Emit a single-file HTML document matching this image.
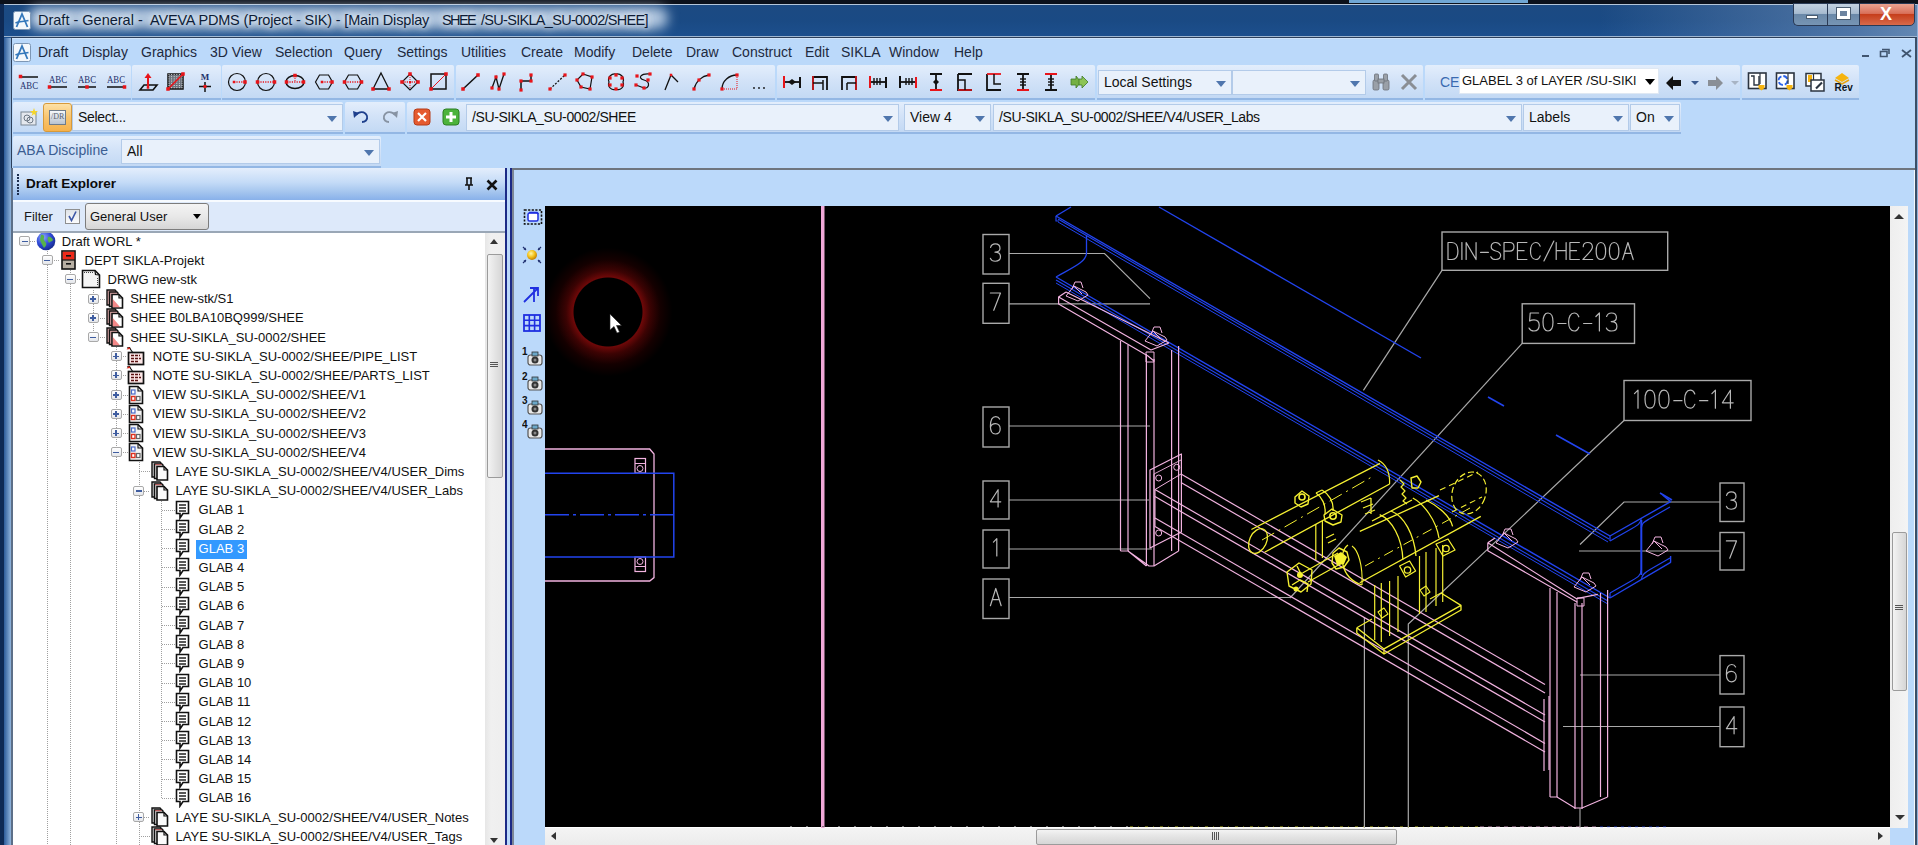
<!DOCTYPE html>
<html><head><meta charset="utf-8">
<style>
*{margin:0;padding:0;box-sizing:border-box}
html,body{width:1918px;height:845px;overflow:hidden;background:#bcd6f4;font-family:"Liberation Sans",sans-serif}
.a{position:absolute}
.t{position:absolute;white-space:nowrap;line-height:1}
#title{left:0;top:0;width:1918px;height:38px;background:linear-gradient(#1f4f8d,#2459a0 60%,#235797)}
.ttl{top:13px;font-size:14.5px;color:#0d1c36;text-shadow:0 0 6px rgba(240,246,252,.95),0 0 10px rgba(235,243,252,.9),0 0 14px rgba(230,240,250,.8)}
.menu{font-size:14px;color:#1e2a3e;top:45px}
.combo{position:absolute;background:#e9f1fb;border:1px solid #a9c3e3}
.dd{position:absolute;width:0;height:0;border-left:5px solid transparent;border-right:5px solid transparent;border-top:5px solid #4a6fa3}
.tb{position:absolute;background:linear-gradient(#dfeafa,#c9ddf5 70%,#bcd4f1);border-bottom:2px solid #8fb3e2}
.tree{font-size:13px;color:#111}
.exp{position:absolute;width:11px;height:11px;border:1px solid #9aa4ad;background:linear-gradient(#fff,#d9dde2);border-radius:2px}
.exp:before{content:"";position:absolute;left:2px;top:4px;width:5px;height:1px;background:#3a4d80}
.exp.p:after{content:"";position:absolute;left:4px;top:2px;width:1px;height:5px;background:#3a4d80}
.vd{position:absolute;width:0;border-left:1px dotted #9a9a9a}
.hd{position:absolute;height:0;border-top:1px dotted #9a9a9a}
</style></head><body>

<!-- top strip -->
<div class="a" style="left:0;top:0;width:1918px;height:4px;background:#0c111b"></div>
<div class="a" style="left:1349px;top:0;width:179px;height:3px;background:#6fa6d4"></div>
<!-- title bar -->
<div class="a" style="left:0;top:4px;width:1918px;height:34px;background:linear-gradient(#1c4a82,#1a4a84 50%,#1d508e)"></div>
<div class="a" style="left:1600px;top:5px;width:318px;height:32px;background:linear-gradient(90deg,rgba(120,150,190,0),rgba(120,150,190,.55) 80%,rgba(130,160,195,.7))"></div>
<div class="a" style="left:0;top:4px;width:1918px;height:1px;background:#b4c6da"></div>
<div class="a" style="left:0;top:36px;width:1918px;height:1px;background:#9fb6d0"></div>
<div class="a" style="left:28px;top:7px;width:640px;height:22px;border-radius:11px;background:rgba(215,230,246,.8);filter:blur(6px)"></div>
<div class="t ttl" id="t1" style="left:38px">Draft - General -</div><div class="t ttl" id="t2" style="left:150px;letter-spacing:-0.17px">AVEVA PDMS (Project - SIK) - [Main Display</div><div class="t ttl" id="t3" style="left:442px;letter-spacing:-1.6px">SHEE</div><div class="t ttl" id="t4" style="left:481px;letter-spacing:-0.7px">/SU-SIKLA_SU-0002/SHEE]</div>
<!-- app icon -->
<svg class="a" style="left:13px;top:11px" width="18" height="19" viewBox="0 0 18 19"><rect x="0.5" y="0.5" width="17" height="18" rx="2" fill="#f4f8fc" stroke="#7d97b5"/><path d="M3.5 16 L9 3 L14.5 16" fill="none" stroke="#3578bb" stroke-width="1.8"/><path d="M2.5 12 C6 10 10 11 15.5 9.5" fill="none" stroke="#3578bb" stroke-width="1.5"/></svg>
<!-- caption buttons -->
<div class="a" style="left:1793px;top:3px;width:34px;height:23px;border:1px solid #2a3a55;border-right:none;border-radius:0 0 0 5px;background:linear-gradient(#c3d1e0,#a7bbd0 45%,#6a88a8 50%,#7795b4)"></div>
<div class="a" style="left:1806px;top:15px;width:12px;height:4px;background:#fff;border:1px solid #4a5c70"></div>
<div class="a" style="left:1827px;top:3px;width:32px;height:23px;border:1px solid #2a3a55;border-right:none;background:linear-gradient(#c3d1e0,#a7bbd0 45%,#6a88a8 50%,#7795b4)"></div>
<div class="a" style="left:1837px;top:8px;width:13px;height:11px;border:3px solid #fff;outline:1px solid #4a5c70;background:#6d84a0"></div>
<div class="a" style="left:1859px;top:3px;width:56px;height:23px;border:1px solid #2a3a55;border-radius:0 0 5px 0;background:linear-gradient(#eaa391,#d9705a 45%,#c63e1c 50%,#d86a4a)"></div>
<div class="t" style="left:1880px;top:5px;font-size:18px;font-weight:bold;color:#fff">X</div>
<!-- outer frame edges -->
<div class="a" style="left:0;top:4px;width:4px;height:841px;background:#0e2a55"></div>
<div class="a" style="left:4px;top:38px;width:7px;height:807px;background:linear-gradient(90deg,#2d5c9a,#90b4dc)"></div>
<div class="a" style="left:1917px;top:4px;width:1px;height:841px;background:#8fb0d8"></div>

<!-- MDI area frame -->
<div class="a" style="left:11px;top:37px;width:1906px;height:808px;background:#bbd9fa;border-top:1px solid #2c3f5a;border-left:1px solid #2c3f5a;border-right:2px solid #3a4e66"></div>
<div class="a" style="left:12px;top:38px;width:1902px;height:1px;background:#cfe4fb"></div>

<!-- menu bar -->
<svg class="a" style="left:13px;top:43px" width="18" height="19" viewBox="0 0 18 19"><rect x="0.5" y="0.5" width="17" height="18" rx="2" fill="#f4f8fc" stroke="#7d97b5"/><path d="M3.5 16 L9 3 L14.5 16" fill="none" stroke="#3578bb" stroke-width="1.8"/><path d="M2.5 12 C6 10 10 11 15.5 9.5" fill="none" stroke="#3578bb" stroke-width="1.5"/></svg>
<div class="t menu" style="left:38px" id="m0">Draft</div>
<div class="t menu" style="left:82px" id="m1">Display</div>
<div class="t menu" style="left:141px" id="m2">Graphics</div>
<div class="t menu" style="left:210px" id="m3">3D View</div>
<div class="t menu" style="left:275px" id="m4">Selection</div>
<div class="t menu" style="left:344px" id="m5">Query</div>
<div class="t menu" style="left:397px" id="m6">Settings</div>
<div class="t menu" style="left:461px" id="m7">Utilities</div>
<div class="t menu" style="left:521px" id="m8">Create</div>
<div class="t menu" style="left:574px" id="m9">Modify</div>
<div class="t menu" style="left:632px" id="m10">Delete</div>
<div class="t menu" style="left:686px" id="m11">Draw</div>
<div class="t menu" style="left:732px" id="m12">Construct</div>
<div class="t menu" style="left:805px" id="m13">Edit</div>
<div class="t menu" style="left:841px" id="m14">SIKLA</div>
<div class="t menu" style="left:889px" id="m15">Window</div>
<div class="t menu" style="left:954px" id="m16">Help</div>
<!-- MDI child buttons -->
<div class="a" style="left:1862px;top:55px;width:7px;height:2px;background:#40556f"></div>
<svg class="a" style="left:1879px;top:48px" width="11" height="10" viewBox="0 0 11 10"><path d="M3 1.5 H10 V6 M1.5 3.5 H8 V8.5 H1.5 Z" fill="none" stroke="#40556f" stroke-width="1.6"/></svg>
<svg class="a" style="left:1901px;top:49px" width="11" height="9" viewBox="0 0 11 9"><path d="M1 1 L10 8 M10 1 L1 8" stroke="#40556f" stroke-width="1.8"/></svg>

<div class="a" style="left:13px;top:65px;width:118px;height:35px;background:linear-gradient(#e3eefc,#d3e3f8 45%,#c3d9f4);border-bottom:2px solid #93b7e4;border-radius:2px 2px 0 0"></div>
<div class="a" style="left:132px;top:65px;width:89px;height:35px;background:linear-gradient(#e3eefc,#d3e3f8 45%,#c3d9f4);border-bottom:2px solid #93b7e4;border-radius:2px 2px 0 0"></div>
<div class="a" style="left:222px;top:65px;width:232px;height:35px;background:linear-gradient(#e3eefc,#d3e3f8 45%,#c3d9f4);border-bottom:2px solid #93b7e4;border-radius:2px 2px 0 0"></div>
<div class="a" style="left:456px;top:65px;width:319px;height:35px;background:linear-gradient(#e3eefc,#d3e3f8 45%,#c3d9f4);border-bottom:2px solid #93b7e4;border-radius:2px 2px 0 0"></div>
<div class="a" style="left:777px;top:65px;width:318px;height:35px;background:linear-gradient(#e3eefc,#d3e3f8 45%,#c3d9f4);border-bottom:2px solid #93b7e4;border-radius:2px 2px 0 0"></div>
<div class="a" style="left:1097px;top:65px;width:326px;height:35px;background:linear-gradient(#e3eefc,#d3e3f8 45%,#c3d9f4);border-bottom:2px solid #93b7e4;border-radius:2px 2px 0 0"></div>
<div class="a" style="left:1425px;top:65px;width:315px;height:35px;background:linear-gradient(#e3eefc,#d3e3f8 45%,#c3d9f4);border-bottom:2px solid #93b7e4;border-radius:2px 2px 0 0"></div>
<div class="a" style="left:1742px;top:65px;width:117px;height:35px;background:linear-gradient(#e3eefc,#d3e3f8 45%,#c3d9f4);border-bottom:2px solid #93b7e4;border-radius:2px 2px 0 0"></div>
<div class="a" style="left:13px;top:102px;width:330px;height:32px;background:linear-gradient(#e3eefc,#d3e3f8 45%,#c3d9f4);border-bottom:2px solid #93b7e4;border-radius:2px 2px 0 0"></div>
<div class="a" style="left:345px;top:102px;width:60px;height:32px;background:linear-gradient(#e3eefc,#d3e3f8 45%,#c3d9f4);border-bottom:2px solid #93b7e4;border-radius:2px 2px 0 0"></div>
<div class="a" style="left:407px;top:102px;width:1274px;height:32px;background:linear-gradient(#e3eefc,#d3e3f8 45%,#c3d9f4);border-bottom:2px solid #93b7e4;border-radius:2px 2px 0 0"></div>
<div class="a" style="left:13px;top:136px;width:368px;height:32px;background:linear-gradient(#e3eefc,#d3e3f8 45%,#c3d9f4);border-bottom:2px solid #93b7e4;border-radius:2px 2px 0 0"></div>
<svg class="a" style="left:18.0px;top:71.0px" width="22" height="22" viewBox="0 0 22 22"><line x1="2" y1="6" x2="20" y2="6" stroke="#111" stroke-width="1.5"/><rect x="0.75" y="3.75" width="3.5" height="3.5" fill="#e8141a"/><text x="11" y="18" font-family="Liberation Serif" font-size="9.5" fill="#23306a" text-anchor="middle" textLength="18" lengthAdjust="spacingAndGlyphs">ABC</text></svg>
<svg class="a" style="left:46.5px;top:71.0px" width="22" height="22" viewBox="0 0 22 22"><text x="11" y="12" font-family="Liberation Serif" font-size="9.5" fill="#23306a" text-anchor="middle" textLength="18" lengthAdjust="spacingAndGlyphs">ABC</text><line x1="2" y1="16" x2="20" y2="16" stroke="#111" stroke-width="1.5"/><rect x="0.75" y="14.25" width="3.5" height="3.5" fill="#e8141a"/></svg>
<svg class="a" style="left:75.5px;top:71.0px" width="22" height="22" viewBox="0 0 22 22"><text x="11" y="12" font-family="Liberation Serif" font-size="9.5" fill="#23306a" text-anchor="middle" textLength="18" lengthAdjust="spacingAndGlyphs">ABC</text><line x1="2" y1="16" x2="20" y2="16" stroke="#111" stroke-width="1.5"/><rect x="9.25" y="14.25" width="3.5" height="3.5" fill="#e8141a"/></svg>
<svg class="a" style="left:104.5px;top:71.0px" width="22" height="22" viewBox="0 0 22 22"><text x="11" y="12" font-family="Liberation Serif" font-size="9.5" fill="#23306a" text-anchor="middle" textLength="18" lengthAdjust="spacingAndGlyphs">ABC</text><line x1="2" y1="16" x2="20" y2="16" stroke="#111" stroke-width="1.5"/><rect x="17.75" y="14.25" width="3.5" height="3.5" fill="#e8141a"/></svg>
<svg class="a" style="left:136.5px;top:71.0px" width="22" height="22" viewBox="0 0 22 22"><path d="M3 19 L7 14 L20 14 L16 19 Z" fill="none" stroke="#111" stroke-width="1.6"/><line x1="11" y1="16" x2="11" y2="5" stroke="#e8141a" stroke-width="2"/><path d="M7.5 7 L11 2 L14.5 7 Z" fill="#e8141a"/><rect x="9.75" y="15.25" width="2.5" height="2.5" fill="#e8141a"/></svg>
<svg class="a" style="left:165.0px;top:71.0px" width="22" height="22" viewBox="0 0 22 22"><rect x="3" y="3" width="15" height="15" fill="#6d737d" stroke="#111" stroke-width="1.5"/><line x1="4.0" y1="3" x2="4.0" y2="18" stroke="#fff" stroke-width="0.8" stroke-dasharray="1 1.2"/><line x1="6.6" y1="3" x2="6.6" y2="18" stroke="#fff" stroke-width="0.8" stroke-dasharray="1 1.2"/><line x1="9.2" y1="3" x2="9.2" y2="18" stroke="#fff" stroke-width="0.8" stroke-dasharray="1 1.2"/><line x1="11.8" y1="3" x2="11.8" y2="18" stroke="#fff" stroke-width="0.8" stroke-dasharray="1 1.2"/><line x1="14.4" y1="3" x2="14.4" y2="18" stroke="#fff" stroke-width="0.8" stroke-dasharray="1 1.2"/><line x1="17.0" y1="3" x2="17.0" y2="18" stroke="#fff" stroke-width="0.8" stroke-dasharray="1 1.2"/><line x1="3" y1="18" x2="18" y2="3" stroke="#e8141a" stroke-width="1.6"/><rect x="1.25" y="16.25" width="3.5" height="3.5" fill="#e8141a"/><rect x="16.25" y="1.25" width="3.5" height="3.5" fill="#e8141a"/></svg>
<svg class="a" style="left:193.5px;top:71.0px" width="22" height="22" viewBox="0 0 22 22"><text x="11" y="9" font-family="Liberation Serif" font-size="9" font-weight="bold" fill="#23306a" text-anchor="middle">M</text><line x1="11" y1="11" x2="11" y2="21" stroke="#111" stroke-width="1.5"/><line x1="5" y1="15.5" x2="17" y2="15.5" stroke="#111" stroke-width="1.5"/><rect x="9.5" y="14.0" width="3" height="3" fill="#e8141a"/></svg>
<svg class="a" style="left:226.0px;top:71.0px" width="22" height="22" viewBox="0 0 22 22"><circle cx="11" cy="11" r="8.5" fill="none" stroke="#111" stroke-width="1.2"/><line x1="8" y1="11" x2="19" y2="11" stroke="#e8141a" stroke-width="1.3" stroke-dasharray="1.2 1.2"/><rect x="6.75" y="9.75" width="2.5" height="2.5" fill="#e8141a"/><rect x="17.25" y="9.25" width="3.5" height="3.5" fill="#e8141a"/></svg>
<svg class="a" style="left:255.0px;top:71.0px" width="22" height="22" viewBox="0 0 22 22"><ellipse cx="11" cy="11" rx="8.5" ry="8.5" fill="none" stroke="#111" stroke-width="1.2"/><line x1="3" y1="11" x2="19" y2="11" stroke="#e8141a" stroke-width="1.3" stroke-dasharray="1.2 1.2"/><rect x="0.75" y="9.25" width="3.5" height="3.5" fill="#e8141a"/><rect x="17.75" y="9.25" width="3.5" height="3.5" fill="#e8141a"/></svg>
<svg class="a" style="left:284.0px;top:71.0px" width="22" height="22" viewBox="0 0 22 22"><ellipse cx="11" cy="11" rx="9" ry="6.5" fill="none" stroke="#111" stroke-width="1.4"/><line x1="3" y1="11" x2="19" y2="11" stroke="#e8141a" stroke-width="1.3" stroke-dasharray="1.2 1.2"/><line x1="11" y1="5" x2="11" y2="11" stroke="#e8141a" stroke-width="1" stroke-dasharray="1 1"/><rect x="0.75" y="9.25" width="3.5" height="3.5" fill="#e8141a"/><rect x="17.75" y="9.25" width="3.5" height="3.5" fill="#e8141a"/><rect x="9.25" y="2.75" width="3.5" height="3.5" fill="#e8141a"/></svg>
<svg class="a" style="left:312.5px;top:71.0px" width="22" height="22" viewBox="0 0 22 22"><path d="M2.5 11 L6.5 4 L15.5 4 L19.5 11 L15.5 18 L6.5 18 Z" fill="none" stroke="#111" stroke-width="1.2"/><line x1="9" y1="11" x2="19" y2="11" stroke="#e8141a" stroke-width="1.3" stroke-dasharray="1.2 1.2"/><rect x="7.75" y="9.75" width="2.5" height="2.5" fill="#e8141a"/><rect x="17.25" y="9.25" width="3.5" height="3.5" fill="#e8141a"/></svg>
<svg class="a" style="left:341.5px;top:71.0px" width="22" height="22" viewBox="0 0 22 22"><path d="M2.5 11 L6.5 4 L15.5 4 L19.5 11 L15.5 18 L6.5 18 Z" fill="none" stroke="#111" stroke-width="1.2"/><line x1="3" y1="11" x2="19" y2="11" stroke="#e8141a" stroke-width="1.3" stroke-dasharray="1.2 1.2"/><rect x="0.75" y="9.25" width="3.5" height="3.5" fill="#e8141a"/><rect x="17.75" y="9.25" width="3.5" height="3.5" fill="#e8141a"/></svg>
<svg class="a" style="left:370.0px;top:71.0px" width="22" height="22" viewBox="0 0 22 22"><path d="M11 2 L19 18 L3 18 Z" fill="none" stroke="#111" stroke-width="1.3"/><rect x="1.25" y="16.25" width="3.5" height="3.5" fill="#e8141a"/><rect x="17.25" y="16.25" width="3.5" height="3.5" fill="#e8141a"/></svg>
<svg class="a" style="left:399.0px;top:71.0px" width="22" height="22" viewBox="0 0 22 22"><path d="M11 3 L19 11 L11 19 L3 11 Z" fill="none" stroke="#111" stroke-width="1.2"/><line x1="3" y1="11" x2="19" y2="11" stroke="#e8141a" stroke-width="1.3" stroke-dasharray="1.2 1.2"/><line x1="11" y1="4" x2="11" y2="18" stroke="#e8141a" stroke-width="1" stroke-dasharray="1 1"/><rect x="1.25" y="9.25" width="3.5" height="3.5" fill="#e8141a"/><rect x="17.25" y="9.25" width="3.5" height="3.5" fill="#e8141a"/><rect x="9.25" y="1.25" width="3.5" height="3.5" fill="#e8141a"/><rect x="10.0" y="10.0" width="2" height="2" fill="#e8141a"/></svg>
<svg class="a" style="left:427.0px;top:71.0px" width="22" height="22" viewBox="0 0 22 22"><rect x="4" y="3" width="15" height="15" fill="none" stroke="#111" stroke-width="1.5"/><line x1="4" y1="18" x2="19" y2="3" stroke="#e8141a" stroke-width="1"/><rect x="2.25" y="16.25" width="3.5" height="3.5" fill="#e8141a"/><rect x="17.25" y="1.25" width="3.5" height="3.5" fill="#e8141a"/></svg>
<svg class="a" style="left:460.0px;top:71.0px" width="22" height="22" viewBox="0 0 22 22"><line x1="3" y1="18" x2="18" y2="4" stroke="#111" stroke-width="1.5"/><rect x="1.25" y="16.25" width="3.5" height="3.5" fill="#e8141a"/><rect x="16.25" y="2.25" width="3.5" height="3.5" fill="#e8141a"/></svg>
<svg class="a" style="left:489.0px;top:71.0px" width="22" height="22" viewBox="0 0 22 22"><path d="M3 17 L7 6 L10 18 L15 3" fill="none" stroke="#111" stroke-width="1.3"/><rect x="1.4" y="15.4" width="3.2" height="3.2" fill="#e8141a"/><rect x="5.4" y="4.4" width="3.2" height="3.2" fill="#e8141a"/><rect x="8.4" y="16.4" width="3.2" height="3.2" fill="#e8141a"/><rect x="13.4" y="1.4" width="3.2" height="3.2" fill="#e8141a"/></svg>
<svg class="a" style="left:517.0px;top:71.0px" width="22" height="22" viewBox="0 0 22 22"><path d="M4 19 L4 10 L14 10 L14 4" fill="none" stroke="#111" stroke-width="1.5"/><rect x="2.4" y="17.4" width="3.2" height="3.2" fill="#e8141a"/><rect x="2.4" y="8.4" width="3.2" height="3.2" fill="#e8141a"/><rect x="12.4" y="8.4" width="3.2" height="3.2" fill="#e8141a"/><rect x="12.4" y="2.4" width="3.2" height="3.2" fill="#e8141a"/></svg>
<svg class="a" style="left:546.5px;top:71.0px" width="22" height="22" viewBox="0 0 22 22"><line x1="3" y1="18" x2="18" y2="4" stroke="#111" stroke-width="1.3" stroke-dasharray="2 1.5"/><rect x="1.4" y="16.4" width="3.2" height="3.2" fill="#e8141a"/><rect x="16.4" y="2.4" width="3.2" height="3.2" fill="#e8141a"/></svg>
<svg class="a" style="left:575.0px;top:71.0px" width="22" height="22" viewBox="0 0 22 22"><path d="M8 3 L17 6 L15 18 L6 16 L2 9 Z" fill="none" stroke="#111" stroke-width="1.2"/><rect x="6.4" y="1.4" width="3.2" height="3.2" fill="#e8141a"/><rect x="15.4" y="4.4" width="3.2" height="3.2" fill="#e8141a"/><rect x="13.4" y="16.4" width="3.2" height="3.2" fill="#e8141a"/><rect x="4.4" y="14.4" width="3.2" height="3.2" fill="#e8141a"/><rect x="0.3999999999999999" y="7.4" width="3.2" height="3.2" fill="#e8141a"/></svg>
<svg class="a" style="left:605.0px;top:71.0px" width="22" height="22" viewBox="0 0 22 22"><path d="M11 3 C15 2 20 6 18 11 C20 16 15 20 11 18 C7 20 2 16 4 11 C2 6 7 2 11 3 Z" fill="none" stroke="#111" stroke-width="1.2"/><rect x="9.4" y="2.4" width="3.2" height="3.2" fill="#e8141a"/><rect x="15.4" y="5.4" width="3.2" height="3.2" fill="#e8141a"/><rect x="15.4" y="12.4" width="3.2" height="3.2" fill="#e8141a"/><rect x="9.4" y="16.4" width="3.2" height="3.2" fill="#e8141a"/><rect x="3.4" y="12.4" width="3.2" height="3.2" fill="#e8141a"/><rect x="3.4" y="5.4" width="3.2" height="3.2" fill="#e8141a"/></svg>
<svg class="a" style="left:633.0px;top:71.0px" width="22" height="22" viewBox="0 0 22 22"><path d="M17 3 C8 2 4 7 11 9 C18 11 16 18 11 17 L3 14" fill="none" stroke="#111" stroke-width="1.2"/><rect x="15.4" y="1.4" width="3.2" height="3.2" fill="#e8141a"/><rect x="2.4" y="3.4" width="3.2" height="3.2" fill="#e8141a"/><rect x="13.4" y="7.4" width="3.2" height="3.2" fill="#e8141a"/><rect x="1.4" y="12.4" width="3.2" height="3.2" fill="#e8141a"/><rect x="9.4" y="15.4" width="3.2" height="3.2" fill="#e8141a"/></svg>
<svg class="a" style="left:662.0px;top:71.0px" width="22" height="22" viewBox="0 0 22 22"><path d="M3 19 L9 4 L16 11" fill="none" stroke="#111" stroke-width="1.3"/><rect x="7.75" y="2.75" width="2.5" height="2.5" fill="#e8141a"/></svg>
<svg class="a" style="left:691.0px;top:71.0px" width="22" height="22" viewBox="0 0 22 22"><path d="M3 18 C5 10 11 5 18 4" fill="none" stroke="#111" stroke-width="1.3"/><rect x="1.4" y="16.4" width="3.2" height="3.2" fill="#e8141a"/><rect x="6.4" y="7.4" width="3.2" height="3.2" fill="#e8141a"/><rect x="16.4" y="2.4" width="3.2" height="3.2" fill="#e8141a"/></svg>
<svg class="a" style="left:719.0px;top:71.0px" width="22" height="22" viewBox="0 0 22 22"><path d="M3 18 C3 10 10 4 18 4" fill="none" stroke="#111" stroke-width="1.3"/><path d="M3 18 L18 18 L18 4" fill="none" stroke="#e8141a" stroke-width="1" stroke-dasharray="1 1"/><rect x="1.4" y="16.4" width="3.2" height="3.2" fill="#e8141a"/><rect x="16.4" y="2.4" width="3.2" height="3.2" fill="#e8141a"/></svg>
<svg class="a" style="left:749.0px;top:71.0px" width="22" height="22" viewBox="0 0 22 22"><circle cx="5" cy="17" r="0.9" fill="#111"/><circle cx="10" cy="17" r="0.9" fill="#111"/><circle cx="15" cy="17" r="0.9" fill="#111"/></svg>
<svg class="a" style="left:780.5px;top:71.0px" width="22" height="22" viewBox="0 0 22 22"><line x1="3" y1="11" x2="19" y2="11" stroke="#111" stroke-width="1.8"/><line x1="3" y1="5" x2="3" y2="17" stroke="#e8141a" stroke-width="2"/><line x1="19" y1="6" x2="19" y2="17" stroke="#111" stroke-width="2"/><path d="M7 11 L11 8 L15 11 L11 14 Z" fill="#111"/></svg>
<svg class="a" style="left:809.0px;top:71.0px" width="22" height="22" viewBox="0 0 22 22"><path d="M4 19 V6 H18 V19" fill="none" stroke="#111" stroke-width="1.8"/><line x1="4" y1="5" x2="4" y2="19" stroke="#e8141a" stroke-width="1.5"/><line x1="4" y1="12" x2="14" y2="12" stroke="#111" stroke-width="1.5"/><line x1="14" y1="9" x2="14" y2="19" stroke="#111" stroke-width="1.5"/></svg>
<svg class="a" style="left:838.0px;top:71.0px" width="22" height="22" viewBox="0 0 22 22"><path d="M4 19 V6 H18 V19" fill="none" stroke="#111" stroke-width="1.8"/><line x1="18" y1="5" x2="18" y2="19" stroke="#e8141a" stroke-width="1.5"/><line x1="9" y1="12" x2="18" y2="12" stroke="#111" stroke-width="1.5"/><line x1="9" y1="12" x2="9" y2="19" stroke="#111" stroke-width="1.5"/></svg>
<svg class="a" style="left:867.4px;top:71.0px" width="22" height="22" viewBox="0 0 22 22"><line x1="3" y1="11" x2="19" y2="11" stroke="#111" stroke-width="1.8"/><line x1="3" y1="5" x2="3" y2="17" stroke="#e8141a" stroke-width="2"/><line x1="19" y1="6" x2="19" y2="17" stroke="#111" stroke-width="2"/><line x1="7" y1="7" x2="7" y2="14" stroke="#111" stroke-width="1.4"/><line x1="10" y1="7" x2="10" y2="14" stroke="#111" stroke-width="1.4"/><line x1="13" y1="7" x2="13" y2="14" stroke="#111" stroke-width="1.4"/></svg>
<svg class="a" style="left:896.7px;top:71.0px" width="22" height="22" viewBox="0 0 22 22"><line x1="3" y1="11" x2="19" y2="11" stroke="#111" stroke-width="1.8"/><line x1="3" y1="5" x2="3" y2="17" stroke="#111" stroke-width="2"/><line x1="19" y1="6" x2="19" y2="17" stroke="#e8141a" stroke-width="2"/><line x1="9" y1="7" x2="9" y2="14" stroke="#111" stroke-width="1.4"/><line x1="12" y1="7" x2="12" y2="14" stroke="#111" stroke-width="1.4"/><line x1="15" y1="7" x2="15" y2="14" stroke="#111" stroke-width="1.4"/></svg>
<svg class="a" style="left:925.0px;top:71.0px" width="22" height="22" viewBox="0 0 22 22"><line x1="11" y1="3" x2="11" y2="19" stroke="#111" stroke-width="1.8"/><line x1="5" y1="3" x2="17" y2="3" stroke="#111" stroke-width="2"/><line x1="5" y1="19" x2="17" y2="19" stroke="#e8141a" stroke-width="2"/><path d="M11 8 L14 11 L11 14 L8 11 Z" fill="#111"/></svg>
<svg class="a" style="left:954.0px;top:71.0px" width="22" height="22" viewBox="0 0 22 22"><path d="M4 3 H18 M4 3 V19 H18" fill="none" stroke="#111" stroke-width="1.8"/><line x1="4" y1="19" x2="18" y2="19" stroke="#e8141a" stroke-width="1.5"/><path d="M4 9 H11 V19" fill="none" stroke="#111" stroke-width="1.5"/></svg>
<svg class="a" style="left:982.7px;top:71.0px" width="22" height="22" viewBox="0 0 22 22"><path d="M4 3 V19 H18" fill="none" stroke="#111" stroke-width="1.8"/><line x1="4" y1="3" x2="18" y2="3" stroke="#e8141a" stroke-width="1.8"/><path d="M11 3 V13 H18" fill="none" stroke="#111" stroke-width="1.5"/></svg>
<svg class="a" style="left:1012.0px;top:71.0px" width="22" height="22" viewBox="0 0 22 22"><line x1="11" y1="3" x2="11" y2="19" stroke="#111" stroke-width="1.8"/><line x1="5" y1="3" x2="17" y2="3" stroke="#111" stroke-width="2"/><line x1="5" y1="19" x2="17" y2="19" stroke="#e8141a" stroke-width="2"/><line x1="8" y1="8" x2="14" y2="8" stroke="#111" stroke-width="1.4"/><line x1="8" y1="11" x2="14" y2="11" stroke="#111" stroke-width="1.4"/><line x1="8" y1="14" x2="14" y2="14" stroke="#111" stroke-width="1.4"/></svg>
<svg class="a" style="left:1040.0px;top:71.0px" width="22" height="22" viewBox="0 0 22 22"><line x1="11" y1="3" x2="11" y2="19" stroke="#111" stroke-width="1.8"/><line x1="5" y1="3" x2="17" y2="3" stroke="#e8141a" stroke-width="2"/><line x1="5" y1="19" x2="17" y2="19" stroke="#111" stroke-width="2"/><line x1="8" y1="8" x2="14" y2="8" stroke="#111" stroke-width="1.4"/><line x1="8" y1="11" x2="14" y2="11" stroke="#111" stroke-width="1.4"/><line x1="8" y1="14" x2="14" y2="14" stroke="#111" stroke-width="1.4"/></svg>
<svg class="a" style="left:1069.0px;top:71.0px" width="22" height="22" viewBox="0 0 22 22"><path d="M2 8 H7 V5 L12 11 L7 17 V14 H2 Z" fill="#74b043" stroke="#3f7a26" stroke-width="0.8"/><path d="M10 8 H13 V5 L19 11 L13 17 V14 H10 Z" fill="#8cc455" stroke="#3f7a26" stroke-width="0.8"/></svg>
<div class="a" style="left:1098px;top:70px;width:134px;height:25px;background:#e9f1fb;border:1px solid #b3cbe9"></div>
<div class="t" id="cLS" style="left:1104px;top:74.7px;font-size:14px;color:#111;letter-spacing:0px">Local Settings</div>
<div class="a" style="left:1216px;top:80.5px;width:0;height:0;border-left:5px solid transparent;border-right:5px solid transparent;border-top:6px solid #4f76ad"></div>
<div class="a" style="left:1232px;top:70px;width:134px;height:25px;background:#e9f1fb;border:1px solid #b3cbe9"></div>
<div class="a" style="left:1350px;top:80.5px;width:0;height:0;border-left:5px solid transparent;border-right:5px solid transparent;border-top:6px solid #4f76ad"></div>
<svg class="a" style="left:1370.0px;top:71.0px" width="22" height="22" viewBox="0 0 22 22"><g fill="#9aa0a8" stroke="#6b7078" stroke-width="0.8"><rect x="3" y="9" width="6" height="10" rx="1.5"/><rect x="13" y="9" width="6" height="10" rx="1.5"/><rect x="4.5" y="3" width="4" height="7" rx="1"/><rect x="13.5" y="3" width="4" height="7" rx="1"/><rect x="8" y="8" width="6" height="4"/></g></svg>
<svg class="a" style="left:1398.0px;top:71.0px" width="22" height="22" viewBox="0 0 22 22"><path d="M4 4 L18 18 M18 4 L4 18" stroke="#8a8e94" stroke-width="3"/></svg>
<div class="t" style="left:1440px;top:75px;font-size:14px;color:#3a6ab0">CE</div>
<div class="a" style="left:1459px;top:68px;width:200px;height:26px;background:#ffffff;border:1px solid #dfe8f3"></div>
<div class="t" id="cGL" style="left:1462px;top:73.7px;font-size:13px;color:#111;letter-spacing:0px">GLABEL 3 of LAYER /SU-SIKl</div>
<div class="a" style="left:1645px;top:79px;width:0;height:0;border-left:5px solid transparent;border-right:5px solid transparent;border-top:6px solid #000"></div>
<svg class="a" style="left:1663.0px;top:72.0px" width="22" height="22" viewBox="0 0 22 22"><path d="M3 11 L10 4 V8 H18 V14 H10 V18 Z" fill="#111"/></svg>
<div class="a" style="left:1691px;top:81px;width:0;height:0;border-left:4px solid transparent;border-right:4px solid transparent;border-top:4px solid #3a5a90"></div>
<svg class="a" style="left:1704.0px;top:72.0px" width="22" height="22" viewBox="0 0 22 22"><path d="M19 11 L12 4 V8 H4 V14 H12 V18 Z" fill="#8a8f96"/></svg>
<div class="a" style="left:1731px;top:81px;width:0;height:0;border-left:4px solid transparent;border-right:4px solid transparent;border-top:4px solid #a8b4c4"></div>
<svg class="a" style="left:1747.0px;top:70.0px" width="22" height="22" viewBox="0 0 22 22"><rect x="1.5" y="3" width="17.5" height="15.5" fill="#fff" stroke="#2b3440" stroke-width="1.6"/><path d="M4 6 H7 V15 H12 V6" fill="none" stroke="#2b3440" stroke-width="1.4"/><rect x="13" y="4" width="5" height="10" fill="#fff"/><path d="M13 3 V14" stroke="#2b3440" stroke-width="1.2"/><path d="M11.5 15 L17.5 15 L17.5 18 L14.5 20.5 L11.5 18 Z" fill="#f6b40f"/></svg>
<svg class="a" style="left:1775.0px;top:70.0px" width="22" height="22" viewBox="0 0 22 22"><rect x="1.5" y="3" width="17.5" height="15.5" fill="#fff" stroke="#2b3440" stroke-width="1.6"/><circle cx="8" cy="10.5" r="4.5" fill="none" stroke="#2a62e8" stroke-width="1.8" stroke-dasharray="5 2"/><path d="M13 3 V14" stroke="#2b3440" stroke-width="1.2"/><path d="M11.5 15 L17.5 15 L17.5 18 L14.5 20.5 L11.5 18 Z" fill="#f6b40f"/></svg>
<svg class="a" style="left:1804.0px;top:71.0px" width="22" height="22" viewBox="0 0 22 22"><rect x="2" y="2.5" width="15" height="12.5" fill="#fff" stroke="#2b3440" stroke-width="1.5"/><rect x="4" y="4" width="4" height="7" fill="#f6b40f"/><path d="M9.5 2.5 V9" stroke="#2b3440" stroke-width="1.2"/><rect x="7" y="9" width="13" height="11" fill="#fff" stroke="#2b3440" stroke-width="1.5"/><path d="M12 17.5 L18 11.5" stroke="#2b3440" stroke-width="2.2"/></svg>
<svg class="a" style="left:1832.0px;top:71.0px" width="24" height="22" viewBox="0 0 24 22"><path d="M3 7 L10 2 L17 7 L10 11 Z" fill="#f6b40f"/><path d="M3 9 L10 13 L17 9" fill="none" stroke="#e9a30c" stroke-width="1.5"/><text x="2.5" y="20" font-size="10" font-family="Liberation Sans" font-weight="bold" fill="#0e1622">Rev</text></svg>
<svg class="a" style="left:18.0px;top:106.0px" width="22" height="22" viewBox="0 0 22 22"><rect x="3" y="6" width="15" height="13" fill="#e4e8ee" stroke="#7b8794" stroke-width="1"/><circle cx="9" cy="12" r="3" fill="none" stroke="#6d7885"/><circle cx="12" cy="14" r="3" fill="none" stroke="#6d7885"/><path d="M16 2 L17 5 L20 5 L17.5 7 L18.5 10 L16 8 L13.5 10 L14.5 7 L12 5 L15 5 Z" fill="#f6d628"/></svg>
<div class="a" style="left:43px;top:103px;width:29px;height:29px;border:1px solid #d79a3a;border-radius:3px;background:linear-gradient(#fde1a6,#f8c46e 50%,#f6b24c)"></div>
<div class="a" style="left:49px;top:110px;width:17px;height:15px;background:linear-gradient(#f6f8fb,#b9c3cf);border:1px solid #6f7c8b"></div>
<div class="t" style="left:51px;top:113px;font-size:8px;color:#5a6472;font-family:Liberation Serif">/DR</div>
<div class="a" style="left:72px;top:104px;width:271px;height:27px;background:#e9f1fb;border:1px solid #b3cbe9"></div>
<div class="t" id="cSel" style="left:78px;top:109.7px;font-size:14px;color:#111;letter-spacing:-0.3px">Select...</div>
<div class="a" style="left:327px;top:115.5px;width:0;height:0;border-left:5px solid transparent;border-right:5px solid transparent;border-top:6px solid #4f76ad"></div>
<svg class="a" style="left:350.0px;top:106.0px" width="22" height="22" viewBox="0 0 22 22"><path d="M6 9 C9 5 15 5 17 10 C18 14 15 16 12 16" fill="none" stroke="#1d3f8c" stroke-width="1.8"/><path d="M3 5 L9 7 L4 12 Z" fill="#1d3f8c"/></svg>
<svg class="a" style="left:379.0px;top:106.0px" width="22" height="22" viewBox="0 0 22 22"><path d="M16 9 C13 5 7 5 5 10 C4 14 7 16 10 16" fill="none" stroke="#8793a3" stroke-width="1.8"/><path d="M19 5 L13 7 L18 12 Z" fill="#8793a3"/></svg>
<svg class="a" style="left:411.0px;top:106.0px" width="22" height="22" viewBox="0 0 22 22"><rect x="3" y="3" width="16" height="16" rx="3" fill="#e55a2f" stroke="#b63b17"/><path d="M7 7 L15 15 M15 7 L7 15" stroke="#fff" stroke-width="2.2"/></svg>
<svg class="a" style="left:440.0px;top:106.0px" width="22" height="22" viewBox="0 0 22 22"><rect x="3" y="3" width="16" height="16" rx="3" fill="#4cb33c" stroke="#2d7f22"/><path d="M11 6 V16 M6 11 H16" stroke="#fff" stroke-width="3"/></svg>
<div class="a" style="left:466px;top:104px;width:433px;height:27px;background:#e9f1fb;border:1px solid #b3cbe9"></div>
<div class="t" id="cS1" style="left:472px;top:109.7px;font-size:14px;color:#111;letter-spacing:-0.4px">/SU-SIKLA_SU-0002/SHEE</div>
<div class="a" style="left:883px;top:115.5px;width:0;height:0;border-left:5px solid transparent;border-right:5px solid transparent;border-top:6px solid #4f76ad"></div>
<div class="a" style="left:904px;top:104px;width:87px;height:27px;background:#e9f1fb;border:1px solid #b3cbe9"></div>
<div class="t" id="cV4" style="left:910px;top:109.7px;font-size:14px;color:#111;letter-spacing:0px">View 4</div>
<div class="a" style="left:975px;top:115.5px;width:0;height:0;border-left:5px solid transparent;border-right:5px solid transparent;border-top:6px solid #4f76ad"></div>
<div class="a" style="left:993px;top:104px;width:529px;height:27px;background:#e9f1fb;border:1px solid #b3cbe9"></div>
<div class="t" id="cS2" style="left:999px;top:109.7px;font-size:14px;color:#111;letter-spacing:-0.4px">/SU-SIKLA_SU-0002/SHEE/V4/USER_Labs</div>
<div class="a" style="left:1506px;top:115.5px;width:0;height:0;border-left:5px solid transparent;border-right:5px solid transparent;border-top:6px solid #4f76ad"></div>
<div class="a" style="left:1523px;top:104px;width:106px;height:27px;background:#e9f1fb;border:1px solid #b3cbe9"></div>
<div class="t" id="cLb" style="left:1529px;top:109.7px;font-size:14px;color:#111;letter-spacing:0px">Labels</div>
<div class="a" style="left:1613px;top:115.5px;width:0;height:0;border-left:5px solid transparent;border-right:5px solid transparent;border-top:6px solid #4f76ad"></div>
<div class="a" style="left:1630px;top:104px;width:50px;height:27px;background:#e9f1fb;border:1px solid #b3cbe9"></div>
<div class="t" id="cOn" style="left:1636px;top:109.7px;font-size:14px;color:#111;letter-spacing:0px">On</div>
<div class="a" style="left:1664px;top:115.5px;width:0;height:0;border-left:5px solid transparent;border-right:5px solid transparent;border-top:6px solid #4f76ad"></div>
<div class="t" id="aba" style="left:17px;top:143px;font-size:14px;color:#3b5d92">ABA Discipline</div>
<div class="a" style="left:121px;top:139px;width:259px;height:25px;background:#e9f1fb;border:1px solid #b3cbe9"></div>
<div class="t" id="cAll" style="left:127px;top:143.7px;font-size:14px;color:#111;letter-spacing:0px">All</div>
<div class="a" style="left:364px;top:149.5px;width:0;height:0;border-left:5px solid transparent;border-right:5px solid transparent;border-top:6px solid #4f76ad"></div>
<div class="a" style="left:12px;top:168px;width:494px;height:677px;background:#dde9fa"></div>
<div class="a" style="left:12px;top:168px;width:494px;height:32px;background:linear-gradient(#e4eefc,#c4dbf7 45%,#a4c5ee 75%,#88b1ea)"></div>
<div class="a" style="left:12px;top:200px;width:494px;height:2px;background:#f7fbff"></div>
<div class="a" style="left:17px;top:174.0px;width:2px;height:2px;background:#1d2f50"></div>
<div class="a" style="left:17px;top:177.2px;width:2px;height:2px;background:#1d2f50"></div>
<div class="a" style="left:17px;top:180.4px;width:2px;height:2px;background:#1d2f50"></div>
<div class="a" style="left:17px;top:183.6px;width:2px;height:2px;background:#1d2f50"></div>
<div class="a" style="left:17px;top:186.8px;width:2px;height:2px;background:#1d2f50"></div>
<div class="a" style="left:17px;top:190.0px;width:2px;height:2px;background:#1d2f50"></div>
<div class="a" style="left:17px;top:193.2px;width:2px;height:2px;background:#1d2f50"></div>
<div class="t" id="dex" style="left:26px;top:177px;font-size:13.5px;font-weight:bold;color:#0b0b0b">Draft Explorer</div>
<svg class="a" style="left:462px;top:176px" width="14" height="16" viewBox="0 0 14 16"><path d="M4 2 H10 M5 2 V9 H9 V2 M3 9 H11 M7 9 V14" fill="none" stroke="#111" stroke-width="1.6"/></svg>
<svg class="a" style="left:485px;top:178px" width="14" height="14" viewBox="0 0 14 14"><path d="M2.5 2.5 L11.5 11.5 M11.5 2.5 L2.5 11.5" stroke="#111" stroke-width="2.6"/></svg>
<div class="t" id="flt" style="left:24px;top:210px;font-size:13px;color:#1a1a1a">Filter</div>
<div class="a" style="left:65px;top:209px;width:15px;height:15px;background:linear-gradient(#dfe3e8,#fbfcfd);border:1px solid #8e8f8f"></div>
<svg class="a" style="left:66px;top:210px" width="13" height="13" viewBox="0 0 13 13"><path d="M3 6 L5.5 10.5 L10 1.5" fill="none" stroke="#3b56a6" stroke-width="1.6"/></svg>
<div class="a" style="left:85px;top:203px;width:124px;height:27px;border:1px solid #7c7c7c;border-radius:3px;background:linear-gradient(#f4f4f4,#e8e8e8 50%,#d6d6d6)"></div>
<div class="t" id="gu" style="left:90px;top:209.5px;font-size:13px;color:#111">General User</div>
<div class="a" style="left:193px;top:214px;width:0;height:0;border-left:4.5px solid transparent;border-right:4.5px solid transparent;border-top:5px solid #000"></div>
<div class="a" style="left:12px;top:231px;width:494px;height:2px;background:#9aa7b6"></div>
<div class="a" style="left:13px;top:233px;width:472px;height:612px;background:#fff"></div>
<div class="a" style="left:485px;top:233px;width:20px;height:612px;background:linear-gradient(90deg,#e6e6e6,#f0f0f0 30%,#eeeeee)"></div>
<div class="a" style="left:487px;top:254px;width:16px;height:224px;border:1px solid #9b9b9b;border-radius:2px;background:linear-gradient(90deg,#f3f3f3,#e4e4e4 50%,#d6d6d6)"></div>
<div class="a" style="left:490px;top:362px;width:8px;height:1px;background:#555;box-shadow:0 2px 0 #555,0 4px 0 #555"></div>
<div class="a" style="left:490px;top:239px;width:0;height:0;border-left:4px solid transparent;border-right:4px solid transparent;border-bottom:5px solid #333"></div>
<div class="a" style="left:490px;top:838px;width:0;height:0;border-left:4px solid transparent;border-right:4px solid transparent;border-top:5px solid #333"></div>
<div class="a" style="left:505px;top:168px;width:2px;height:677px;background:#1b2a86"></div>
<div class="a" style="left:507px;top:168px;width:3px;height:677px;background:#bbd9fa"></div>
<div class="a" style="left:510px;top:168px;width:2px;height:677px;background:#1b2a86"></div>
<div class="a" style="left:512px;top:168px;width:2px;height:677px;background:#7d8796"></div>
<div class="a" style="left:11px;top:168px;width:2px;height:677px;background:#5c6f88"></div>
<div class="a" style="left:13px;top:233px;width:472px;height:612px;overflow:hidden">
<div class="a" style="left:34px;top:18.19999999999999px;width:1px;height:593.8px;background:repeating-linear-gradient(#a0a0a0 0 1px,transparent 1px 2px)"></div>
<div class="a" style="left:57px;top:37.39999999999998px;width:1px;height:574.6px;background:repeating-linear-gradient(#a0a0a0 0 1px,transparent 1px 2px)"></div>
<div class="a" style="left:80px;top:56.60000000000002px;width:1px;height:48.39999999999998px;background:repeating-linear-gradient(#a0a0a0 0 1px,transparent 1px 2px)"></div>
<div class="a" style="left:103px;top:114.19999999999999px;width:1px;height:497.8px;background:repeating-linear-gradient(#a0a0a0 0 1px,transparent 1px 2px)"></div>
<div class="a" style="left:126px;top:229.39999999999998px;width:1px;height:382.6px;background:repeating-linear-gradient(#a0a0a0 0 1px,transparent 1px 2px)"></div>
<div class="a" style="left:148px;top:267.8px;width:1px;height:297.99999999999994px;background:repeating-linear-gradient(#a0a0a0 0 1px,transparent 1px 2px)"></div>
<div class="a" style="left:16.5px;top:8.0px;width:6.0px;height:1px;background:repeating-linear-gradient(90deg,#a0a0a0 0 1px,transparent 1px 2px)"></div>
<div class="a" style="left:6.0px;top:3.0px;width:11px;height:10px;border:1px solid #a9a9a9;border-radius:2px;background:linear-gradient(#ffffff,#e4e6ea)"></div>
<div class="a" style="left:8.5px;top:7.5px;width:6px;height:1.5px;background:#3f5da0"></div>
<svg class="a" style="left:22.5px;top:-2.0px" width="20" height="20" viewBox="0 0 20 20"><defs><radialGradient id="gg" cx="35%" cy="30%" r="75%"><stop offset="0" stop-color="#8fa8ff"/><stop offset="0.55" stop-color="#2f49d6"/><stop offset="1" stop-color="#152a8a"/></radialGradient></defs><circle cx="10" cy="10" r="9.3" fill="url(#gg)"/><path d="M5 4 C7 3 9 5 8 7 C7 9 9 10 10 12 C11 14 9 16 8 17 C6 14 5 11 4 9 Z" fill="#58b34a"/><path d="M12 6 C14 5 16 7 17 9 C16 11 14 10 13 12 C12 10 11 8 12 6 Z" fill="#58b34a"/></svg>
<div class="t tree" id="tr0" style="left:48.8px;top:1.5px">Draft WORL *</div>
<div class="a" style="left:39.3px;top:27.19999999999999px;width:8.200000000000003px;height:1px;background:repeating-linear-gradient(90deg,#a0a0a0 0 1px,transparent 1px 2px)"></div>
<div class="a" style="left:28.799999999999997px;top:22.19999999999999px;width:11px;height:10px;border:1px solid #a9a9a9;border-radius:2px;background:linear-gradient(#ffffff,#e4e6ea)"></div>
<div class="a" style="left:31.299999999999997px;top:26.69999999999999px;width:6px;height:1.5px;background:#3f5da0"></div>
<svg class="a" style="left:47.5px;top:17.19999999999999px" width="15" height="20" viewBox="0 0 15 20"><rect x="1" y="1" width="13" height="18" fill="#b7afa3" stroke="#111" stroke-width="1.6"/><rect x="1.8" y="1.8" width="11.4" height="8" fill="#ee2a1a"/><line x1="1" y1="10" x2="14" y2="10" stroke="#111" stroke-width="1.2"/><rect x="5" y="5" width="5" height="1.6" fill="#111"/><rect x="5" y="13" width="5" height="1.6" fill="#111"/></svg>
<div class="t tree" id="tr1" style="left:71.6px;top:20.69999999999999px">DEPT SIKLA-Projekt</div>
<div class="a" style="left:62.2px;top:46.39999999999998px;width:5.799999999999997px;height:1px;background:repeating-linear-gradient(90deg,#a0a0a0 0 1px,transparent 1px 2px)"></div>
<div class="a" style="left:51.7px;top:41.39999999999998px;width:11px;height:10px;border:1px solid #a9a9a9;border-radius:2px;background:linear-gradient(#ffffff,#e4e6ea)"></div>
<div class="a" style="left:54.2px;top:45.89999999999998px;width:6px;height:1.5px;background:#3f5da0"></div>
<svg class="a" style="left:68.0px;top:36.39999999999998px" width="20" height="20" viewBox="0 0 20 20"><path d="M1.5 1.5 H14 L18.5 6 V18.5 H1.5 Z" fill="#f4f4f4" stroke="#111" stroke-width="1.6"/><path d="M3 3.5 H12" stroke="#444" stroke-width="1" stroke-dasharray="1 1"/><path d="M14 2 L14.5 5.5 L18 6" fill="none" stroke="#111" stroke-width="1.2"/><path d="M16.5 9 V16" stroke="#444" stroke-width="1" stroke-dasharray="1 1"/></svg>
<div class="t tree" id="tr2" style="left:94.6px;top:39.89999999999998px">DRWG new-stk</div>
<div class="a" style="left:85.0px;top:65.60000000000002px;width:7.5px;height:1px;background:repeating-linear-gradient(90deg,#a0a0a0 0 1px,transparent 1px 2px)"></div>
<div class="a" style="left:74.5px;top:60.60000000000002px;width:11px;height:10px;border:1px solid #a9a9a9;border-radius:2px;background:linear-gradient(#ffffff,#e4e6ea)"></div>
<div class="a" style="left:77.0px;top:65.10000000000002px;width:6px;height:1.5px;background:#3f5da0"></div>
<div class="a" style="left:79.25px;top:62.60000000000002px;width:1.5px;height:6px;background:#3f5da0"></div>
<svg class="a" style="left:92.5px;top:55.60000000000002px" width="18" height="20" viewBox="0 0 18 20"><path d="M1 1 H9 L10 2 V16 H1 Z" fill="#d9a8a8" stroke="#111" stroke-width="1.4"/><path d="M3.5 3 H11 L12 4 V17.5 H3.5 Z" fill="#e8b0b0" stroke="#111" stroke-width="1.4"/><path d="M6 5.5 H13 L16.5 9 V19 H6 Z" fill="#fff" stroke="#111" stroke-width="1.6"/><path d="M6.8 10 L6.8 18.2 L14 18.2 Z" fill="#f06060" opacity="0.75"/><path d="M13 5.5 V9 H16.5" fill="none" stroke="#111" stroke-width="1.2"/></svg>
<div class="t tree" id="tr3" style="left:117.19999999999999px;top:59.10000000000002px">SHEE new-stk/S1</div>
<div class="a" style="left:85.0px;top:84.80000000000001px;width:7.5px;height:1px;background:repeating-linear-gradient(90deg,#a0a0a0 0 1px,transparent 1px 2px)"></div>
<div class="a" style="left:74.5px;top:79.80000000000001px;width:11px;height:10px;border:1px solid #a9a9a9;border-radius:2px;background:linear-gradient(#ffffff,#e4e6ea)"></div>
<div class="a" style="left:77.0px;top:84.30000000000001px;width:6px;height:1.5px;background:#3f5da0"></div>
<div class="a" style="left:79.25px;top:81.80000000000001px;width:1.5px;height:6px;background:#3f5da0"></div>
<svg class="a" style="left:92.5px;top:74.80000000000001px" width="18" height="20" viewBox="0 0 18 20"><path d="M1 1 H9 L10 2 V16 H1 Z" fill="#d9a8a8" stroke="#111" stroke-width="1.4"/><path d="M3.5 3 H11 L12 4 V17.5 H3.5 Z" fill="#e8b0b0" stroke="#111" stroke-width="1.4"/><path d="M6 5.5 H13 L16.5 9 V19 H6 Z" fill="#fff" stroke="#111" stroke-width="1.6"/><path d="M6.8 10 L6.8 18.2 L14 18.2 Z" fill="#f06060" opacity="0.75"/><path d="M13 5.5 V9 H16.5" fill="none" stroke="#111" stroke-width="1.2"/></svg>
<div class="t tree" id="tr4" style="left:117.19999999999999px;top:78.30000000000001px">SHEE B0LBA10BQ999/SHEE</div>
<div class="a" style="left:85.0px;top:104.0px;width:7.5px;height:1px;background:repeating-linear-gradient(90deg,#a0a0a0 0 1px,transparent 1px 2px)"></div>
<div class="a" style="left:74.5px;top:99.0px;width:11px;height:10px;border:1px solid #a9a9a9;border-radius:2px;background:linear-gradient(#ffffff,#e4e6ea)"></div>
<div class="a" style="left:77.0px;top:103.5px;width:6px;height:1.5px;background:#3f5da0"></div>
<svg class="a" style="left:92.5px;top:94.0px" width="18" height="20" viewBox="0 0 18 20"><path d="M1 1 H9 L10 2 V16 H1 Z" fill="#d9a8a8" stroke="#111" stroke-width="1.4"/><path d="M3.5 3 H11 L12 4 V17.5 H3.5 Z" fill="#e8b0b0" stroke="#111" stroke-width="1.4"/><path d="M6 5.5 H13 L16.5 9 V19 H6 Z" fill="#fff" stroke="#111" stroke-width="1.6"/><path d="M6.8 10 L6.8 18.2 L14 18.2 Z" fill="#f06060" opacity="0.75"/><path d="M13 5.5 V9 H16.5" fill="none" stroke="#111" stroke-width="1.2"/></svg>
<div class="t tree" id="tr5" style="left:117.19999999999999px;top:97.5px">SHEE SU-SIKLA_SU-0002/SHEE</div>
<div class="a" style="left:108.0px;top:123.19999999999999px;width:5.300000000000011px;height:1px;background:repeating-linear-gradient(90deg,#a0a0a0 0 1px,transparent 1px 2px)"></div>
<div class="a" style="left:97.5px;top:118.19999999999999px;width:11px;height:10px;border:1px solid #a9a9a9;border-radius:2px;background:linear-gradient(#ffffff,#e4e6ea)"></div>
<div class="a" style="left:100.0px;top:122.69999999999999px;width:6px;height:1.5px;background:#3f5da0"></div>
<div class="a" style="left:102.25px;top:120.19999999999999px;width:1.5px;height:6px;background:#3f5da0"></div>
<svg class="a" style="left:113.30000000000001px;top:113.69999999999999px" width="19" height="19" viewBox="0 0 19 19"><rect x="2.5" y="5.5" width="15" height="12" fill="#fbe6e6" stroke="#111" stroke-width="1.7"/><path d="M5 8.5 H14 M5 11.5 H15 M5 14.5 H13" stroke="#5a1010" stroke-width="1.5" stroke-dasharray="3 1"/><path d="M1 1 L3.5 0.5 L5 3 L7 6" stroke="#111" stroke-width="1.2" fill="none"/><path d="M0.5 2.5 L3 0 L4.5 2 Z" fill="#e02a1a"/></svg>
<div class="t tree" id="tr6" style="left:139.8px;top:116.69999999999999px">NOTE SU-SIKLA_SU-0002/SHEE/PIPE_LIST</div>
<div class="a" style="left:108.0px;top:142.39999999999998px;width:5.300000000000011px;height:1px;background:repeating-linear-gradient(90deg,#a0a0a0 0 1px,transparent 1px 2px)"></div>
<div class="a" style="left:97.5px;top:137.39999999999998px;width:11px;height:10px;border:1px solid #a9a9a9;border-radius:2px;background:linear-gradient(#ffffff,#e4e6ea)"></div>
<div class="a" style="left:100.0px;top:141.89999999999998px;width:6px;height:1.5px;background:#3f5da0"></div>
<div class="a" style="left:102.25px;top:139.39999999999998px;width:1.5px;height:6px;background:#3f5da0"></div>
<svg class="a" style="left:113.30000000000001px;top:132.89999999999998px" width="19" height="19" viewBox="0 0 19 19"><rect x="2.5" y="5.5" width="15" height="12" fill="#fbe6e6" stroke="#111" stroke-width="1.7"/><path d="M5 8.5 H14 M5 11.5 H15 M5 14.5 H13" stroke="#5a1010" stroke-width="1.5" stroke-dasharray="3 1"/><path d="M1 1 L3.5 0.5 L5 3 L7 6" stroke="#111" stroke-width="1.2" fill="none"/><path d="M0.5 2.5 L3 0 L4.5 2 Z" fill="#e02a1a"/></svg>
<div class="t tree" id="tr7" style="left:139.8px;top:135.89999999999998px">NOTE SU-SIKLA_SU-0002/SHEE/PARTS_LIST</div>
<div class="a" style="left:108.0px;top:161.60000000000002px;width:6.800000000000011px;height:1px;background:repeating-linear-gradient(90deg,#a0a0a0 0 1px,transparent 1px 2px)"></div>
<div class="a" style="left:97.5px;top:156.60000000000002px;width:11px;height:10px;border:1px solid #a9a9a9;border-radius:2px;background:linear-gradient(#ffffff,#e4e6ea)"></div>
<div class="a" style="left:100.0px;top:161.10000000000002px;width:6px;height:1.5px;background:#3f5da0"></div>
<div class="a" style="left:102.25px;top:158.60000000000002px;width:1.5px;height:6px;background:#3f5da0"></div>
<svg class="a" style="left:114.80000000000001px;top:151.60000000000002px" width="16" height="20" viewBox="0 0 16 20"><path d="M1.5 1.5 H10 L14.5 6 V18.5 H1.5 Z" fill="#f4f4f4" stroke="#111" stroke-width="1.6"/><path d="M10 2 V6 H14" fill="none" stroke="#111" stroke-width="1.1"/><rect x="3.5" y="5" width="3.5" height="4" fill="#fff" stroke="#4a6bc8" stroke-width="1.2"/><rect x="3.5" y="11.5" width="3.5" height="4" fill="#fff" stroke="#e0301e" stroke-width="1.4"/><rect x="8.5" y="11.5" width="3.5" height="4" fill="#fff" stroke="#666" stroke-width="1.2"/></svg>
<div class="t tree" id="tr8" style="left:139.8px;top:155.10000000000002px">VIEW SU-SIKLA_SU-0002/SHEE/V1</div>
<div class="a" style="left:108.0px;top:180.79999999999995px;width:6.800000000000011px;height:1px;background:repeating-linear-gradient(90deg,#a0a0a0 0 1px,transparent 1px 2px)"></div>
<div class="a" style="left:97.5px;top:175.79999999999995px;width:11px;height:10px;border:1px solid #a9a9a9;border-radius:2px;background:linear-gradient(#ffffff,#e4e6ea)"></div>
<div class="a" style="left:100.0px;top:180.29999999999995px;width:6px;height:1.5px;background:#3f5da0"></div>
<div class="a" style="left:102.25px;top:177.79999999999995px;width:1.5px;height:6px;background:#3f5da0"></div>
<svg class="a" style="left:114.80000000000001px;top:170.79999999999995px" width="16" height="20" viewBox="0 0 16 20"><path d="M1.5 1.5 H10 L14.5 6 V18.5 H1.5 Z" fill="#f4f4f4" stroke="#111" stroke-width="1.6"/><path d="M10 2 V6 H14" fill="none" stroke="#111" stroke-width="1.1"/><rect x="3.5" y="5" width="3.5" height="4" fill="#fff" stroke="#4a6bc8" stroke-width="1.2"/><rect x="3.5" y="11.5" width="3.5" height="4" fill="#fff" stroke="#e0301e" stroke-width="1.4"/><rect x="8.5" y="11.5" width="3.5" height="4" fill="#fff" stroke="#666" stroke-width="1.2"/></svg>
<div class="t tree" id="tr9" style="left:139.8px;top:174.29999999999995px">VIEW SU-SIKLA_SU-0002/SHEE/V2</div>
<div class="a" style="left:108.0px;top:200.0px;width:6.800000000000011px;height:1px;background:repeating-linear-gradient(90deg,#a0a0a0 0 1px,transparent 1px 2px)"></div>
<div class="a" style="left:97.5px;top:195.0px;width:11px;height:10px;border:1px solid #a9a9a9;border-radius:2px;background:linear-gradient(#ffffff,#e4e6ea)"></div>
<div class="a" style="left:100.0px;top:199.5px;width:6px;height:1.5px;background:#3f5da0"></div>
<div class="a" style="left:102.25px;top:197.0px;width:1.5px;height:6px;background:#3f5da0"></div>
<svg class="a" style="left:114.80000000000001px;top:190.0px" width="16" height="20" viewBox="0 0 16 20"><path d="M1.5 1.5 H10 L14.5 6 V18.5 H1.5 Z" fill="#f4f4f4" stroke="#111" stroke-width="1.6"/><path d="M10 2 V6 H14" fill="none" stroke="#111" stroke-width="1.1"/><rect x="3.5" y="5" width="3.5" height="4" fill="#fff" stroke="#4a6bc8" stroke-width="1.2"/><rect x="3.5" y="11.5" width="3.5" height="4" fill="#fff" stroke="#e0301e" stroke-width="1.4"/><rect x="8.5" y="11.5" width="3.5" height="4" fill="#fff" stroke="#666" stroke-width="1.2"/></svg>
<div class="t tree" id="tr10" style="left:139.8px;top:193.5px">VIEW SU-SIKLA_SU-0002/SHEE/V3</div>
<div class="a" style="left:108.0px;top:219.2px;width:6.800000000000011px;height:1px;background:repeating-linear-gradient(90deg,#a0a0a0 0 1px,transparent 1px 2px)"></div>
<div class="a" style="left:97.5px;top:214.2px;width:11px;height:10px;border:1px solid #a9a9a9;border-radius:2px;background:linear-gradient(#ffffff,#e4e6ea)"></div>
<div class="a" style="left:100.0px;top:218.7px;width:6px;height:1.5px;background:#3f5da0"></div>
<svg class="a" style="left:114.80000000000001px;top:209.2px" width="16" height="20" viewBox="0 0 16 20"><path d="M1.5 1.5 H10 L14.5 6 V18.5 H1.5 Z" fill="#f4f4f4" stroke="#111" stroke-width="1.6"/><path d="M10 2 V6 H14" fill="none" stroke="#111" stroke-width="1.1"/><rect x="3.5" y="5" width="3.5" height="4" fill="#fff" stroke="#4a6bc8" stroke-width="1.2"/><rect x="3.5" y="11.5" width="3.5" height="4" fill="#fff" stroke="#e0301e" stroke-width="1.4"/><rect x="8.5" y="11.5" width="3.5" height="4" fill="#fff" stroke="#666" stroke-width="1.2"/></svg>
<div class="t tree" id="tr11" style="left:139.8px;top:212.7px">VIEW SU-SIKLA_SU-0002/SHEE/V4</div>
<div class="a" style="left:125.6px;top:238.39999999999998px;width:11.900000000000006px;height:1px;background:repeating-linear-gradient(90deg,#a0a0a0 0 1px,transparent 1px 2px)"></div>
<svg class="a" style="left:137.5px;top:228.39999999999998px" width="18" height="20" viewBox="0 0 18 20"><path d="M1 1 H9 L10 2 V16 H1 Z" fill="#c9c9c9" stroke="#111" stroke-width="1.4"/><path d="M3.5 3 H11 L12 4 V17.5 H3.5 Z" fill="#d8d8d8" stroke="#111" stroke-width="1.4"/><path d="M4.2 3.7 H10.5" stroke="#d06060" stroke-width="1"/><path d="M6 5.5 H13 L16.5 9 V19 H6 Z" fill="#fbfbfb" stroke="#111" stroke-width="1.6"/><path d="M13 5.5 V9 H16.5" fill="none" stroke="#111" stroke-width="1.2"/></svg>
<div class="t tree" id="tr12" style="left:162.6px;top:231.89999999999998px">LAYE SU-SIKLA_SU-0002/SHEE/V4/USER_Dims</div>
<div class="a" style="left:130.6px;top:257.6px;width:6.900000000000006px;height:1px;background:repeating-linear-gradient(90deg,#a0a0a0 0 1px,transparent 1px 2px)"></div>
<div class="a" style="left:120.1px;top:252.60000000000002px;width:11px;height:10px;border:1px solid #a9a9a9;border-radius:2px;background:linear-gradient(#ffffff,#e4e6ea)"></div>
<div class="a" style="left:122.6px;top:257.1px;width:6px;height:1.5px;background:#3f5da0"></div>
<svg class="a" style="left:137.5px;top:247.60000000000002px" width="18" height="20" viewBox="0 0 18 20"><path d="M1 1 H9 L10 2 V16 H1 Z" fill="#c9c9c9" stroke="#111" stroke-width="1.4"/><path d="M3.5 3 H11 L12 4 V17.5 H3.5 Z" fill="#d8d8d8" stroke="#111" stroke-width="1.4"/><path d="M4.2 3.7 H10.5" stroke="#d06060" stroke-width="1"/><path d="M6 5.5 H13 L16.5 9 V19 H6 Z" fill="#fbfbfb" stroke="#111" stroke-width="1.6"/><path d="M13 5.5 V9 H16.5" fill="none" stroke="#111" stroke-width="1.2"/></svg>
<div class="t tree" id="tr13" style="left:162.6px;top:251.10000000000002px">LAYE SU-SIKLA_SU-0002/SHEE/V4/USER_Labs</div>
<div class="a" style="left:148.5px;top:276.8px;width:13.0px;height:1px;background:repeating-linear-gradient(90deg,#a0a0a0 0 1px,transparent 1px 2px)"></div>
<svg class="a" style="left:161.5px;top:266.8px" width="15" height="20" viewBox="0 0 15 20"><path d="M1.5 1.5 H13.5 V13.5 H8 L5 18 V13.5 H1.5 Z" fill="#fff" stroke="#111" stroke-width="1.6"/><path d="M4 5 H11 M4 8 H11 M4 11 H11" stroke="#222" stroke-width="1.5"/></svg>
<div class="t tree" id="tr14" style="left:185.6px;top:270.3px">GLAB 1</div>
<div class="a" style="left:148.5px;top:296.0px;width:13.0px;height:1px;background:repeating-linear-gradient(90deg,#a0a0a0 0 1px,transparent 1px 2px)"></div>
<svg class="a" style="left:161.5px;top:286.0px" width="15" height="20" viewBox="0 0 15 20"><path d="M1.5 1.5 H13.5 V13.5 H8 L5 18 V13.5 H1.5 Z" fill="#fff" stroke="#111" stroke-width="1.6"/><path d="M4 5 H11 M4 8 H11 M4 11 H11" stroke="#222" stroke-width="1.5"/></svg>
<div class="t tree" id="tr15" style="left:185.6px;top:289.5px">GLAB 2</div>
<div class="a" style="left:148.5px;top:315.20000000000005px;width:13.0px;height:1px;background:repeating-linear-gradient(90deg,#a0a0a0 0 1px,transparent 1px 2px)"></div>
<svg class="a" style="left:161.5px;top:305.20000000000005px" width="15" height="20" viewBox="0 0 15 20"><path d="M1.5 1.5 H13.5 V13.5 H8 L5 18 V13.5 H1.5 Z" fill="#fff" stroke="#111" stroke-width="1.6"/><path d="M4 5 H11 M4 8 H11 M4 11 H11" stroke="#222" stroke-width="1.5"/></svg>
<div class="a" style="left:183px;top:307px;width:51px;height:19px;background:#3399ff"></div>
<div class="t tree" id="tr16" style="left:185.6px;top:308.70000000000005px;color:#fff">GLAB 3</div>
<div class="a" style="left:148.5px;top:334.4px;width:13.0px;height:1px;background:repeating-linear-gradient(90deg,#a0a0a0 0 1px,transparent 1px 2px)"></div>
<svg class="a" style="left:161.5px;top:324.4px" width="15" height="20" viewBox="0 0 15 20"><path d="M1.5 1.5 H13.5 V13.5 H8 L5 18 V13.5 H1.5 Z" fill="#fff" stroke="#111" stroke-width="1.6"/><path d="M4 5 H11 M4 8 H11 M4 11 H11" stroke="#222" stroke-width="1.5"/></svg>
<div class="t tree" id="tr17" style="left:185.6px;top:327.9px">GLAB 4</div>
<div class="a" style="left:148.5px;top:353.5999999999999px;width:13.0px;height:1px;background:repeating-linear-gradient(90deg,#a0a0a0 0 1px,transparent 1px 2px)"></div>
<svg class="a" style="left:161.5px;top:343.5999999999999px" width="15" height="20" viewBox="0 0 15 20"><path d="M1.5 1.5 H13.5 V13.5 H8 L5 18 V13.5 H1.5 Z" fill="#fff" stroke="#111" stroke-width="1.6"/><path d="M4 5 H11 M4 8 H11 M4 11 H11" stroke="#222" stroke-width="1.5"/></svg>
<div class="t tree" id="tr18" style="left:185.6px;top:347.0999999999999px">GLAB 5</div>
<div class="a" style="left:148.5px;top:372.79999999999995px;width:13.0px;height:1px;background:repeating-linear-gradient(90deg,#a0a0a0 0 1px,transparent 1px 2px)"></div>
<svg class="a" style="left:161.5px;top:362.79999999999995px" width="15" height="20" viewBox="0 0 15 20"><path d="M1.5 1.5 H13.5 V13.5 H8 L5 18 V13.5 H1.5 Z" fill="#fff" stroke="#111" stroke-width="1.6"/><path d="M4 5 H11 M4 8 H11 M4 11 H11" stroke="#222" stroke-width="1.5"/></svg>
<div class="t tree" id="tr19" style="left:185.6px;top:366.29999999999995px">GLAB 6</div>
<div class="a" style="left:148.5px;top:392.0px;width:13.0px;height:1px;background:repeating-linear-gradient(90deg,#a0a0a0 0 1px,transparent 1px 2px)"></div>
<svg class="a" style="left:161.5px;top:382.0px" width="15" height="20" viewBox="0 0 15 20"><path d="M1.5 1.5 H13.5 V13.5 H8 L5 18 V13.5 H1.5 Z" fill="#fff" stroke="#111" stroke-width="1.6"/><path d="M4 5 H11 M4 8 H11 M4 11 H11" stroke="#222" stroke-width="1.5"/></svg>
<div class="t tree" id="tr20" style="left:185.6px;top:385.5px">GLAB 7</div>
<div class="a" style="left:148.5px;top:411.20000000000005px;width:13.0px;height:1px;background:repeating-linear-gradient(90deg,#a0a0a0 0 1px,transparent 1px 2px)"></div>
<svg class="a" style="left:161.5px;top:401.20000000000005px" width="15" height="20" viewBox="0 0 15 20"><path d="M1.5 1.5 H13.5 V13.5 H8 L5 18 V13.5 H1.5 Z" fill="#fff" stroke="#111" stroke-width="1.6"/><path d="M4 5 H11 M4 8 H11 M4 11 H11" stroke="#222" stroke-width="1.5"/></svg>
<div class="t tree" id="tr21" style="left:185.6px;top:404.70000000000005px">GLAB 8</div>
<div class="a" style="left:148.5px;top:430.4px;width:13.0px;height:1px;background:repeating-linear-gradient(90deg,#a0a0a0 0 1px,transparent 1px 2px)"></div>
<svg class="a" style="left:161.5px;top:420.4px" width="15" height="20" viewBox="0 0 15 20"><path d="M1.5 1.5 H13.5 V13.5 H8 L5 18 V13.5 H1.5 Z" fill="#fff" stroke="#111" stroke-width="1.6"/><path d="M4 5 H11 M4 8 H11 M4 11 H11" stroke="#222" stroke-width="1.5"/></svg>
<div class="t tree" id="tr22" style="left:185.6px;top:423.9px">GLAB 9</div>
<div class="a" style="left:148.5px;top:449.5999999999999px;width:13.0px;height:1px;background:repeating-linear-gradient(90deg,#a0a0a0 0 1px,transparent 1px 2px)"></div>
<svg class="a" style="left:161.5px;top:439.5999999999999px" width="15" height="20" viewBox="0 0 15 20"><path d="M1.5 1.5 H13.5 V13.5 H8 L5 18 V13.5 H1.5 Z" fill="#fff" stroke="#111" stroke-width="1.6"/><path d="M4 5 H11 M4 8 H11 M4 11 H11" stroke="#222" stroke-width="1.5"/></svg>
<div class="t tree" id="tr23" style="left:185.6px;top:443.0999999999999px">GLAB 10</div>
<div class="a" style="left:148.5px;top:468.79999999999995px;width:13.0px;height:1px;background:repeating-linear-gradient(90deg,#a0a0a0 0 1px,transparent 1px 2px)"></div>
<svg class="a" style="left:161.5px;top:458.79999999999995px" width="15" height="20" viewBox="0 0 15 20"><path d="M1.5 1.5 H13.5 V13.5 H8 L5 18 V13.5 H1.5 Z" fill="#fff" stroke="#111" stroke-width="1.6"/><path d="M4 5 H11 M4 8 H11 M4 11 H11" stroke="#222" stroke-width="1.5"/></svg>
<div class="t tree" id="tr24" style="left:185.6px;top:462.29999999999995px">GLAB 11</div>
<div class="a" style="left:148.5px;top:488.0px;width:13.0px;height:1px;background:repeating-linear-gradient(90deg,#a0a0a0 0 1px,transparent 1px 2px)"></div>
<svg class="a" style="left:161.5px;top:478.0px" width="15" height="20" viewBox="0 0 15 20"><path d="M1.5 1.5 H13.5 V13.5 H8 L5 18 V13.5 H1.5 Z" fill="#fff" stroke="#111" stroke-width="1.6"/><path d="M4 5 H11 M4 8 H11 M4 11 H11" stroke="#222" stroke-width="1.5"/></svg>
<div class="t tree" id="tr25" style="left:185.6px;top:481.5px">GLAB 12</div>
<div class="a" style="left:148.5px;top:507.20000000000005px;width:13.0px;height:1px;background:repeating-linear-gradient(90deg,#a0a0a0 0 1px,transparent 1px 2px)"></div>
<svg class="a" style="left:161.5px;top:497.20000000000005px" width="15" height="20" viewBox="0 0 15 20"><path d="M1.5 1.5 H13.5 V13.5 H8 L5 18 V13.5 H1.5 Z" fill="#fff" stroke="#111" stroke-width="1.6"/><path d="M4 5 H11 M4 8 H11 M4 11 H11" stroke="#222" stroke-width="1.5"/></svg>
<div class="t tree" id="tr26" style="left:185.6px;top:500.70000000000005px">GLAB 13</div>
<div class="a" style="left:148.5px;top:526.4px;width:13.0px;height:1px;background:repeating-linear-gradient(90deg,#a0a0a0 0 1px,transparent 1px 2px)"></div>
<svg class="a" style="left:161.5px;top:516.4px" width="15" height="20" viewBox="0 0 15 20"><path d="M1.5 1.5 H13.5 V13.5 H8 L5 18 V13.5 H1.5 Z" fill="#fff" stroke="#111" stroke-width="1.6"/><path d="M4 5 H11 M4 8 H11 M4 11 H11" stroke="#222" stroke-width="1.5"/></svg>
<div class="t tree" id="tr27" style="left:185.6px;top:519.9px">GLAB 14</div>
<div class="a" style="left:148.5px;top:545.6px;width:13.0px;height:1px;background:repeating-linear-gradient(90deg,#a0a0a0 0 1px,transparent 1px 2px)"></div>
<svg class="a" style="left:161.5px;top:535.6px" width="15" height="20" viewBox="0 0 15 20"><path d="M1.5 1.5 H13.5 V13.5 H8 L5 18 V13.5 H1.5 Z" fill="#fff" stroke="#111" stroke-width="1.6"/><path d="M4 5 H11 M4 8 H11 M4 11 H11" stroke="#222" stroke-width="1.5"/></svg>
<div class="t tree" id="tr28" style="left:185.6px;top:539.1px">GLAB 15</div>
<div class="a" style="left:148.5px;top:564.8px;width:13.0px;height:1px;background:repeating-linear-gradient(90deg,#a0a0a0 0 1px,transparent 1px 2px)"></div>
<svg class="a" style="left:161.5px;top:554.8px" width="15" height="20" viewBox="0 0 15 20"><path d="M1.5 1.5 H13.5 V13.5 H8 L5 18 V13.5 H1.5 Z" fill="#fff" stroke="#111" stroke-width="1.6"/><path d="M4 5 H11 M4 8 H11 M4 11 H11" stroke="#222" stroke-width="1.5"/></svg>
<div class="t tree" id="tr29" style="left:185.6px;top:558.3px">GLAB 16</div>
<div class="a" style="left:130.6px;top:584.0px;width:6.900000000000006px;height:1px;background:repeating-linear-gradient(90deg,#a0a0a0 0 1px,transparent 1px 2px)"></div>
<div class="a" style="left:120.1px;top:579.0px;width:11px;height:10px;border:1px solid #a9a9a9;border-radius:2px;background:linear-gradient(#ffffff,#e4e6ea)"></div>
<div class="a" style="left:122.6px;top:583.5px;width:6px;height:1.5px;background:#3f5da0"></div>
<div class="a" style="left:124.85px;top:581.0px;width:1.5px;height:6px;background:#3f5da0"></div>
<svg class="a" style="left:137.5px;top:574.0px" width="18" height="20" viewBox="0 0 18 20"><path d="M1 1 H9 L10 2 V16 H1 Z" fill="#c9c9c9" stroke="#111" stroke-width="1.4"/><path d="M3.5 3 H11 L12 4 V17.5 H3.5 Z" fill="#d8d8d8" stroke="#111" stroke-width="1.4"/><path d="M4.2 3.7 H10.5" stroke="#d06060" stroke-width="1"/><path d="M6 5.5 H13 L16.5 9 V19 H6 Z" fill="#fbfbfb" stroke="#111" stroke-width="1.6"/><path d="M13 5.5 V9 H16.5" fill="none" stroke="#111" stroke-width="1.2"/></svg>
<div class="t tree" id="tr30" style="left:162.6px;top:577.5px">LAYE SU-SIKLA_SU-0002/SHEE/V4/USER_Notes</div>
<div class="a" style="left:125.6px;top:603.1999999999999px;width:11.900000000000006px;height:1px;background:repeating-linear-gradient(90deg,#a0a0a0 0 1px,transparent 1px 2px)"></div>
<svg class="a" style="left:137.5px;top:593.1999999999999px" width="18" height="20" viewBox="0 0 18 20"><path d="M1 1 H9 L10 2 V16 H1 Z" fill="#c9c9c9" stroke="#111" stroke-width="1.4"/><path d="M3.5 3 H11 L12 4 V17.5 H3.5 Z" fill="#d8d8d8" stroke="#111" stroke-width="1.4"/><path d="M4.2 3.7 H10.5" stroke="#d06060" stroke-width="1"/><path d="M6 5.5 H13 L16.5 9 V19 H6 Z" fill="#fbfbfb" stroke="#111" stroke-width="1.6"/><path d="M13 5.5 V9 H16.5" fill="none" stroke="#111" stroke-width="1.2"/></svg>
<div class="t tree" id="tr31" style="left:162.6px;top:596.6999999999999px">LAYE SU-SIKLA_SU-0002/SHEE/V4/USER_Tags</div>
</div>
<div class="a" style="left:514px;top:168px;width:1400px;height:677px;background:#bbd9fa"></div>
<div class="a" style="left:512px;top:168px;width:1403px;height:2px;background:#6e757e"></div>
<div class="a" style="left:545px;top:206px;width:1345px;height:622px;background:#000"></div>
<div class="a" style="left:1914px;top:170px;width:1px;height:675px;background:#f4f8fd"></div>
<div class="a" style="left:545px;top:828px;width:1345px;height:17px;background:linear-gradient(#f4f4f4,#ececec)"></div>
<div class="a" style="left:545px;top:827px;width:1345px;height:1px;background:#fff"></div>
<div class="a" style="left:1036px;top:829px;width:361px;height:16px;border:1px solid #9b9b9b;border-radius:2px;background:linear-gradient(#f3f3f3,#e3e3e3 50%,#d6d6d6)"></div>
<div class="a" style="left:1212px;top:832px;width:1px;height:8px;background:#555;box-shadow:2px 0 0 #555,4px 0 0 #555,6px 0 0 #555"></div>
<div class="a" style="left:551px;top:832px;width:0;height:0;border-top:4px solid transparent;border-bottom:4px solid transparent;border-right:5px solid #333"></div>
<div class="a" style="left:1878px;top:832px;width:0;height:0;border-top:4px solid transparent;border-bottom:4px solid transparent;border-left:5px solid #333"></div>
<div class="a" style="left:1890px;top:206px;width:18px;height:622px;background:linear-gradient(90deg,#eeeeee,#f4f4f4)"></div>
<div class="a" style="left:1892px;top:532px;width:15px;height:159px;border:1px solid #9b9b9b;border-radius:2px;background:linear-gradient(90deg,#f3f3f3,#e4e4e4 50%,#d6d6d6)"></div>
<div class="a" style="left:1895px;top:605px;width:8px;height:1px;background:#555;box-shadow:0 2px 0 #555,0 4px 0 #555"></div>
<div class="a" style="left:1894px;top:214px;width:0;height:0;border-left:5px solid transparent;border-right:5px solid transparent;border-bottom:5px solid #333"></div>
<div class="a" style="left:1895px;top:815px;width:0;height:0;border-left:5px solid transparent;border-right:5px solid transparent;border-top:5px solid #333"></div>
<svg class="a" style="left:521.5px;top:206.0px" width="22" height="22" viewBox="0 0 22 22"><rect x="2.5" y="4" width="17" height="14" fill="none" stroke="#111" stroke-width="1.6" stroke-dasharray="2.2 1.4"/><rect x="6" y="7" width="10" height="8" rx="1.5" fill="#fff" stroke="#1f2fe0" stroke-width="1.5"/><path d="M7 6.5 H15 L16.5 8" fill="none" stroke="#1f2fe0" stroke-width="1.5"/></svg>
<svg class="a" style="left:521.0px;top:244.0px" width="22" height="22" viewBox="0 0 22 22"><defs><radialGradient id="sg" cx="40%" cy="35%" r="60%"><stop offset="0" stop-color="#fff6a8"/><stop offset="0.6" stop-color="#f4c21a"/><stop offset="1" stop-color="#c98a08"/></radialGradient></defs><circle cx="11" cy="11" r="5" fill="url(#sg)"/><path d="M2 3 L5 6 M20 3 L17 6 M2 19 L5 16 M20 19 L17 16" stroke="#203070" stroke-width="1.2"/><path d="M5 6 l-2.5 -0.5 l2 -2 z M17 6 l2.5 -0.5 l-2 -2z M5 16 l-2.5 0.5 l2 2z M17 16 l2.5 0.5 l-2 2z" fill="#203070"/></svg>
<svg class="a" style="left:521.0px;top:283.0px" width="22" height="22" viewBox="0 0 22 22"><path d="M3 19 L17 5 M9 5 H17 V13 M13 5 V19" fill="none" stroke="#1f2fe0" stroke-width="1.8"/></svg>
<svg class="a" style="left:521.0px;top:312.0px" width="22" height="22" viewBox="0 0 22 22"><rect x="3" y="3" width="16" height="16" fill="none" stroke="#1f2fe0" stroke-width="1.8"/><path d="M3 8.3 H19 M3 13.6 H19 M8.3 3 V19 M13.6 3 V19" stroke="#1f2fe0" stroke-width="1.6"/></svg>
<svg class="a" style="left:522.0px;top:346.0px" width="22" height="22" viewBox="0 0 22 22"><text x="0" y="9" font-family="Liberation Sans" font-weight="bold" font-size="10" fill="#111">1</text><rect x="6" y="9" width="14" height="10" rx="2.5" fill="#e8e8e8" stroke="#555" stroke-width="1.2"/><rect x="10" y="6" width="6" height="4" fill="#6aa7c8" stroke="#333" stroke-width="0.8"/><circle cx="13" cy="14" r="3.5" fill="#333"/><circle cx="13" cy="14" r="1.5" fill="#888"/></svg>
<svg class="a" style="left:522.0px;top:371.0px" width="22" height="22" viewBox="0 0 22 22"><text x="0" y="9" font-family="Liberation Sans" font-weight="bold" font-size="10" fill="#111">2</text><rect x="6" y="9" width="14" height="10" rx="2.5" fill="#e8e8e8" stroke="#555" stroke-width="1.2"/><rect x="10" y="6" width="6" height="4" fill="#6aa7c8" stroke="#333" stroke-width="0.8"/><circle cx="13" cy="14" r="3.5" fill="#333"/><circle cx="13" cy="14" r="1.5" fill="#888"/></svg>
<svg class="a" style="left:522.0px;top:395.0px" width="22" height="22" viewBox="0 0 22 22"><text x="0" y="9" font-family="Liberation Sans" font-weight="bold" font-size="10" fill="#111">3</text><rect x="6" y="9" width="14" height="10" rx="2.5" fill="#e8e8e8" stroke="#555" stroke-width="1.2"/><rect x="10" y="6" width="6" height="4" fill="#6aa7c8" stroke="#333" stroke-width="0.8"/><circle cx="13" cy="14" r="3.5" fill="#333"/><circle cx="13" cy="14" r="1.5" fill="#888"/></svg>
<svg class="a" style="left:522.0px;top:419.0px" width="22" height="22" viewBox="0 0 22 22"><text x="0" y="9" font-family="Liberation Sans" font-weight="bold" font-size="10" fill="#111">4</text><rect x="6" y="9" width="14" height="10" rx="2.5" fill="#e8e8e8" stroke="#555" stroke-width="1.2"/><rect x="10" y="6" width="6" height="4" fill="#6aa7c8" stroke="#333" stroke-width="0.8"/><circle cx="13" cy="14" r="3.5" fill="#333"/><circle cx="13" cy="14" r="1.5" fill="#888"/></svg>
<svg class="a" style="left:545px;top:206px" width="1345" height="622" viewBox="545 206 1345 622">
<defs><radialGradient id="glow" cx="608" cy="312" r="70" gradientUnits="userSpaceOnUse"><stop offset="0" stop-color="#000"/><stop offset="0.485" stop-color="#000"/><stop offset="0.5" stop-color="#6e0808"/><stop offset="0.6" stop-color="#3c0303"/><stop offset="0.75" stop-color="#140000"/><stop offset="0.92" stop-color="#000"/></radialGradient></defs>
<circle cx="608" cy="312" r="70" fill="url(#glow)"/>
<path d="M545 449 H649.7 L654 454 V577.6 L649.7 581 H545" fill="none" stroke="#f2b3e0" stroke-width="1.3"/>
<rect x="635" y="458.5" width="10.5" height="14.5" fill="none" stroke="#f2b3e0" stroke-width="1.2"/><rect x="635" y="557" width="10.5" height="14.5" fill="none" stroke="#f2b3e0" stroke-width="1.2"/>
<path d="M635 463.5 H645.5 M635 566.5 H645.5" stroke="#f2b3e0" stroke-width="1"/><circle cx="640" cy="468.5" r="3" fill="none" stroke="#f2b3e0" stroke-width="1"/><circle cx="640" cy="561.5" r="3" fill="none" stroke="#f2b3e0" stroke-width="1"/>
<path d="M545 473.3 H673.8 V557 H545" fill="none" stroke="#2244ee" stroke-width="1.5"/>
<path d="M545 514.8 H673.8" stroke="#2244ee" stroke-width="1.5" stroke-dasharray="24 4 3 4"/>
<rect x="821" y="206" width="3.5" height="622" fill="#f0a8d8"/>
<rect x="983" y="234.5" width="26" height="39.5" fill="none" stroke="#a9a9a9" stroke-width="1.4"/>
<g fill="none" stroke="#b8b8b8" stroke-width="1.250" stroke-linecap="round" stroke-linejoin="round"><path transform="translate(990.40,243.95) scale(0.96)" d="M0.2 3.5 C1 1 3 0 5 0 C8 0 10 2 10 4.6 C10 7.2 8 8.6 4.8 8.6 C8.5 8.6 10.5 10.8 10.5 13.4 C10.5 16.5 8 18 5 18 C2.6 18 0.8 17 0 15"/></g>
<rect x="983" y="283.3" width="26" height="40" fill="none" stroke="#a9a9a9" stroke-width="1.4"/>
<g fill="none" stroke="#b8b8b8" stroke-width="1.250" stroke-linecap="round" stroke-linejoin="round"><path transform="translate(990.40,293.00) scale(0.96)" d="M0 0 L10.5 0 L3.5 18"/></g>
<path d="M1009 303.9 H1150" fill="none" stroke="#a9a9a9" stroke-width="1.2"/>
<rect x="983" y="407" width="26" height="40" fill="none" stroke="#a9a9a9" stroke-width="1.4"/>
<g fill="none" stroke="#b8b8b8" stroke-width="1.250" stroke-linecap="round" stroke-linejoin="round"><path transform="translate(990.40,416.70) scale(0.96)" d="M9.6 2.5 C8.8 0.8 7.2 0 5.6 0 C2 0 0 4 0 10 C0 15.5 2 18 5.2 18 C8.2 18 10.2 15.8 10.2 12.6 C10.2 9.3 8 7.2 5.2 7.2 C2.6 7.2 0.8 8.6 0 11"/></g>
<path d="M1009 426 H1150" fill="none" stroke="#a9a9a9" stroke-width="1.2"/>
<rect x="983" y="481" width="26" height="38" fill="none" stroke="#a9a9a9" stroke-width="1.4"/>
<g fill="none" stroke="#b8b8b8" stroke-width="1.250" stroke-linecap="round" stroke-linejoin="round"><path transform="translate(990.40,489.70) scale(0.96)" d="M8 18 L8 0 L0 12.6 L10.8 12.6"/></g>
<path d="M1009 500 H1149" fill="none" stroke="#a9a9a9" stroke-width="1.2"/>
<rect x="983" y="530" width="26" height="38" fill="none" stroke="#a9a9a9" stroke-width="1.4"/>
<g fill="none" stroke="#b8b8b8" stroke-width="1.250" stroke-linecap="round" stroke-linejoin="round"><path transform="translate(992.00,538.70) scale(0.96)" d="M1.5 3.5 L5 0 L5 18"/></g>
<path d="M1009 549 H1152" fill="none" stroke="#a9a9a9" stroke-width="1.2"/>
<rect x="983" y="579" width="26" height="39.5" fill="none" stroke="#a9a9a9" stroke-width="1.4"/>
<g fill="none" stroke="#b8b8b8" stroke-width="1.250" stroke-linecap="round" stroke-linejoin="round"><path transform="translate(990.40,588.45) scale(0.96)" d="M0 18 L5.6 0 L11.2 18 M2 11.6 L9.2 11.6"/></g>
<path d="M1009 597.5 H1290" fill="none" stroke="#a9a9a9" stroke-width="1.2"/>
<path d="M1009 253.5 H1104.5 L1150 298.6" fill="none" stroke="#a9a9a9" stroke-width="1.2"/>
<rect x="1720" y="483" width="24" height="38.5" fill="none" stroke="#a9a9a9" stroke-width="1.4"/>
<g fill="none" stroke="#b8b8b8" stroke-width="1.250" stroke-linecap="round" stroke-linejoin="round"><path transform="translate(1726.40,491.95) scale(0.96)" d="M0.2 3.5 C1 1 3 0 5 0 C8 0 10 2 10 4.6 C10 7.2 8 8.6 4.8 8.6 C8.5 8.6 10.5 10.8 10.5 13.4 C10.5 16.5 8 18 5 18 C2.6 18 0.8 17 0 15"/></g>
<rect x="1720" y="532.5" width="24" height="37.5" fill="none" stroke="#a9a9a9" stroke-width="1.4"/>
<g fill="none" stroke="#b8b8b8" stroke-width="1.250" stroke-linecap="round" stroke-linejoin="round"><path transform="translate(1726.40,540.95) scale(0.96)" d="M0 0 L10.5 0 L3.5 18"/></g>
<path d="M1720 551 H1579" fill="none" stroke="#a9a9a9" stroke-width="1.2"/>
<rect x="1720" y="655.6" width="24" height="38.4" fill="none" stroke="#a9a9a9" stroke-width="1.4"/>
<g fill="none" stroke="#b8b8b8" stroke-width="1.250" stroke-linecap="round" stroke-linejoin="round"><path transform="translate(1726.40,664.50) scale(0.96)" d="M9.6 2.5 C8.8 0.8 7.2 0 5.6 0 C2 0 0 4 0 10 C0 15.5 2 18 5.2 18 C8.2 18 10.2 15.8 10.2 12.6 C10.2 9.3 8 7.2 5.2 7.2 C2.6 7.2 0.8 8.6 0 11"/></g>
<path d="M1720 675 H1580" fill="none" stroke="#a9a9a9" stroke-width="1.2"/>
<rect x="1720" y="707" width="24" height="39.7" fill="none" stroke="#a9a9a9" stroke-width="1.4"/>
<g fill="none" stroke="#b8b8b8" stroke-width="1.250" stroke-linecap="round" stroke-linejoin="round"><path transform="translate(1726.40,716.55) scale(0.96)" d="M8 18 L8 0 L0 12.6 L10.8 12.6"/></g>
<path d="M1720 726.5 H1563" fill="none" stroke="#a9a9a9" stroke-width="1.2"/>
<path d="M1720 502 H1624 L1580 544.5" fill="none" stroke="#a9a9a9" stroke-width="1.2"/>
<rect x="1442" y="232" width="225.7" height="38.3" fill="none" stroke="#a9a9a9" stroke-width="1.4"/>
<g fill="none" stroke="#b8b8b8" stroke-width="1.270" stroke-linecap="round" stroke-linejoin="round"><path transform="translate(1448.00,242.50) scale(0.945)" d="M0 0 L0 18 L4.2 18 C8.2 18 10.5 14.5 10.5 9 C10.5 3.5 8.2 0 4.2 0 Z"/><path transform="translate(1461.42,242.50) scale(0.945)" d="M0.5 0 L0.5 18"/><path transform="translate(1466.14,242.50) scale(0.945)" d="M0 18 L0 0 L10.5 18 L10.5 0"/><path transform="translate(1479.85,242.50) scale(0.945)" d="M0.8 10.5 L9 10.5"/><path transform="translate(1490.81,242.50) scale(0.945)" d="M10 3 C9 1 7.2 0 5.2 0 C2.2 0 0.4 1.6 0.4 4.5 C0.4 7.4 2.8 8.4 5.2 9 C7.8 9.6 10.4 10.6 10.4 13.6 C10.4 16.4 8.2 18 5.2 18 C2.6 18 1 17 0 15"/><path transform="translate(1504.04,242.50) scale(0.945)" d="M0 18 L0 0 L6 0 C9 0 10.5 2 10.5 4.6 C10.5 7.2 9 9.2 6 9.2 L0 9.2"/><path transform="translate(1517.46,242.50) scale(0.945)" d="M10 0 L0 0 L0 18 L10 18 M0 8.6 L7 8.6"/><path transform="translate(1530.50,242.50) scale(0.945)" d="M10.2 3.8 C9.2 1.2 7.5 0 5.6 0 C2 0 0 4 0 9 C0 14 2 18 5.6 18 C7.5 18 9.2 16.8 10.2 14.2"/><path transform="translate(1543.92,242.50) scale(0.945)" d="M10.5 -1.5 L0 19.5"/><path transform="translate(1556.20,242.50) scale(0.945)" d="M0 0 L0 18 M10.5 0 L10.5 18 M0 8.6 L10.5 8.6"/><path transform="translate(1569.91,242.50) scale(0.945)" d="M10 0 L0 0 L0 18 L10 18 M0 8.6 L7 8.6"/><path transform="translate(1582.95,242.50) scale(0.945)" d="M0.3 4.5 C0.3 1.5 2.5 0 5 0 C8 0 10 1.8 10 4.8 C10 8.5 6 11 0 18 L10.3 18"/><path transform="translate(1596.18,242.50) scale(0.945)" d="M5 0 C1.5 0 0 4 0 9 C0 14 1.5 18 5 18 C8.5 18 10 14 10 9 C10 4 8.5 0 5 0 Z"/><path transform="translate(1609.41,242.50) scale(0.945)" d="M5 0 C1.5 0 0 4 0 9 C0 14 1.5 18 5 18 C8.5 18 10 14 10 9 C10 4 8.5 0 5 0 Z"/><path transform="translate(1622.64,242.50) scale(0.945)" d="M0 18 L5.6 0 L11.2 18 M2 11.6 L9.2 11.6"/></g>
<path d="M1442 270.3 L1363.4 390.4" fill="none" stroke="#a9a9a9" stroke-width="1.2"/>
<rect x="1522.2" y="303.8" width="112.3" height="39.6" fill="none" stroke="#a9a9a9" stroke-width="1.4"/>
<g fill="none" stroke="#b8b8b8" stroke-width="1.200" stroke-linecap="round" stroke-linejoin="round"><path transform="translate(1529.00,313.00) scale(1.0)" d="M9.6 0 L1.2 0 L0.6 8 C2 7.1 3.5 6.8 5 6.8 C8.2 6.8 10.2 9 10.2 12.3 C10.2 15.8 8 18 5 18 C2.6 18 0.9 17 0 15"/><path transform="translate(1543.00,313.00) scale(1.0)" d="M5 0 C1.5 0 0 4 0 9 C0 14 1.5 18 5 18 C8.5 18 10 14 10 9 C10 4 8.5 0 5 0 Z"/><path transform="translate(1557.00,313.00) scale(1.0)" d="M0.8 10.5 L9 10.5"/><path transform="translate(1568.60,313.00) scale(1.0)" d="M10.2 3.8 C9.2 1.2 7.5 0 5.6 0 C2 0 0 4 0 9 C0 14 2 18 5.6 18 C7.5 18 9.2 16.8 10.2 14.2"/><path transform="translate(1582.80,313.00) scale(1.0)" d="M0.8 10.5 L9 10.5"/><path transform="translate(1594.40,313.00) scale(1.0)" d="M1.5 3.5 L5 0 L5 18"/><path transform="translate(1606.40,313.00) scale(1.0)" d="M0.2 3.5 C1 1 3 0 5 0 C8 0 10 2 10 4.6 C10 7.2 8 8.6 4.8 8.6 C8.5 8.6 10.5 10.8 10.5 13.4 C10.5 16.5 8 18 5 18 C2.6 18 0.8 17 0 15"/></g>
<path d="M1522.2 343.4 L1290 598" fill="none" stroke="#a9a9a9" stroke-width="1.2"/>
<rect x="1624" y="380.5" width="127" height="40" fill="none" stroke="#a9a9a9" stroke-width="1.4"/>
<g fill="none" stroke="#b8b8b8" stroke-width="1.200" stroke-linecap="round" stroke-linejoin="round"><path transform="translate(1633.00,390.20) scale(1.0)" d="M1.5 3.5 L5 0 L5 18"/><path transform="translate(1645.00,390.20) scale(1.0)" d="M5 0 C1.5 0 0 4 0 9 C0 14 1.5 18 5 18 C8.5 18 10 14 10 9 C10 4 8.5 0 5 0 Z"/><path transform="translate(1659.00,390.20) scale(1.0)" d="M5 0 C1.5 0 0 4 0 9 C0 14 1.5 18 5 18 C8.5 18 10 14 10 9 C10 4 8.5 0 5 0 Z"/><path transform="translate(1673.00,390.20) scale(1.0)" d="M0.8 10.5 L9 10.5"/><path transform="translate(1684.60,390.20) scale(1.0)" d="M10.2 3.8 C9.2 1.2 7.5 0 5.6 0 C2 0 0 4 0 9 C0 14 2 18 5.6 18 C7.5 18 9.2 16.8 10.2 14.2"/><path transform="translate(1698.80,390.20) scale(1.0)" d="M0.8 10.5 L9 10.5"/><path transform="translate(1710.40,390.20) scale(1.0)" d="M1.5 3.5 L5 0 L5 18"/><path transform="translate(1722.40,390.20) scale(1.0)" d="M8 18 L8 0 L0 12.6 L10.8 12.6"/></g>
<path d="M1624 420.5 L1408.3 624 V828" fill="none" stroke="#a9a9a9" stroke-width="1.2"/>
<path d="M1364.4 617 V828" fill="none" stroke="#a9a9a9" stroke-width="1.2"/>
<path d="M1056 216 L1610 536" fill="none" stroke="#2244ee" stroke-width="1.4" stroke-linejoin="round" />
<path d="M1058 219 L1609 539" fill="none" stroke="#2244ee" stroke-width="1.1" stroke-linejoin="round" />
<path d="M1058 222 L1608 542" fill="none" stroke="#2244ee" stroke-width="1.0" stroke-linejoin="round" />
<path d="M1056 216 L1071 207" fill="none" stroke="#2244ee" stroke-width="1.4" stroke-linejoin="round" />
<path d="M1056 216 V221 L1059 221" fill="none" stroke="#2244ee" stroke-width="1.2" stroke-linejoin="round" />
<path d="M1159 207 L1421 358" fill="none" stroke="#2244ee" stroke-width="1.4" stroke-linejoin="round" />
<path d="M1488 397 L1504 406 M1556 435 L1590 454 M1660 493 L1672 500" fill="none" stroke="#2244ee" stroke-width="1.6" stroke-linejoin="round" />
<path d="M1086.5 235 V253 C1086.5 262 1072 268 1056 277" fill="none" stroke="#2244ee" stroke-width="1.3" stroke-linejoin="round" />
<path d="M1056 277 L1610 598" fill="none" stroke="#2244ee" stroke-width="1.4" stroke-linejoin="round" />
<path d="M1056 280 L1608 601" fill="none" stroke="#2244ee" stroke-width="1.1" stroke-linejoin="round" />
<path d="M1056 283 L1607 603.5" fill="none" stroke="#2244ee" stroke-width="1.0" stroke-linejoin="round" />
<path d="M1610 536 L1670.6 501.6 L1662.6 495" fill="none" stroke="#2244ee" stroke-width="1.4" stroke-linejoin="round" />
<path d="M1610 541 L1632 528.5 C1638 525 1641 523 1641.3 518" fill="none" stroke="#2244ee" stroke-width="1.2" stroke-linejoin="round" />
<path d="M1670 507 L1650 518.5 C1645 521.5 1641.5 523 1641.3 528" fill="none" stroke="#2244ee" stroke-width="1.2" stroke-linejoin="round" />
<path d="M1641.3 520 V575" fill="none" stroke="#2244ee" stroke-width="2.0" stroke-linejoin="round" />
<path d="M1610 593 L1632 580.5 C1638 577 1641 575 1641.3 570" fill="none" stroke="#2244ee" stroke-width="1.2" stroke-linejoin="round" />
<path d="M1670 558 L1650 569.5 C1645 572.5 1641.5 575 1641.3 580" fill="none" stroke="#2244ee" stroke-width="1.2" stroke-linejoin="round" />
<path d="M1610 598 L1670.6 562.3 V556" fill="none" stroke="#2244ee" stroke-width="1.4" stroke-linejoin="round" />
<path d="M1610 536 V541 M1610 593 V598" fill="none" stroke="#2244ee" stroke-width="1.2" stroke-linejoin="round" />
<path d="M1066 292 L1058.6 297 V304 L1148 356 L1154 361" fill="none" stroke="#f2b3e0" stroke-width="1.2" stroke-linejoin="round" />
<path d="M1058.6 297 L1151 350 L1169 343 M1066 292 L1169 343" fill="none" stroke="#f2b3e0" stroke-width="1.2" stroke-linejoin="round" />
<path d="M1146 352 h8 v10 h-8 z" fill="none" stroke="#f2b3e0" stroke-width="1.0" stroke-linejoin="round" />
<path d="M1066 296 L1074 286 L1086 292 L1088 295 L1078 301 Z M1072 289 L1075 282 L1081 282 L1083 288 M1074 286 L1082 294" fill="none" stroke="#f2b3e0" stroke-width="1.0" stroke-linejoin="round" />
<path d="M1145 341 L1153 331 L1165 337 L1167 340 L1157 346 Z M1151 334 L1154 327 L1160 327 L1162 333 M1153 331 L1161 339" fill="none" stroke="#f2b3e0" stroke-width="1.0" stroke-linejoin="round" />
<path d="M1496 543 L1504 533 L1516 539 L1518 542 L1508 548 Z M1502 536 L1505 529 L1511 529 L1513 535 M1504 533 L1512 541" fill="none" stroke="#f2b3e0" stroke-width="1.0" stroke-linejoin="round" />
<path d="M1574 587 L1582 577 L1594 583 L1596 586 L1586 592 Z M1580 580 L1583 573 L1589 573 L1591 579 M1582 577 L1590 585" fill="none" stroke="#f2b3e0" stroke-width="1.0" stroke-linejoin="round" />
<path d="M1646 551 L1654 541 L1666 547 L1668 550 L1658 556 Z M1652 544 L1655 537 L1661 537 L1663 543 M1654 541 L1662 549" fill="none" stroke="#f2b3e0" stroke-width="1.0" stroke-linejoin="round" />
<path d="M1120.5 341 V551" fill="none" stroke="#f2b3e0" stroke-width="1.2" stroke-linejoin="round" />
<path d="M1128 345 V551" fill="none" stroke="#f2b3e0" stroke-width="1.2" stroke-linejoin="round" />
<path d="M1146.4 354 V566" fill="none" stroke="#f2b3e0" stroke-width="1.2" stroke-linejoin="round" />
<path d="M1154 359 V566" fill="none" stroke="#f2b3e0" stroke-width="1.2" stroke-linejoin="round" />
<path d="M1171.6 350 V551" fill="none" stroke="#f2b3e0" stroke-width="1.2" stroke-linejoin="round" />
<path d="M1178.6 346 V551" fill="none" stroke="#f2b3e0" stroke-width="1.2" stroke-linejoin="round" />
<path d="M1120.5 551 H1128 L1146.4 564 L1149 566 L1154 566 L1178.6 551 M1128 551 L1146.4 566" fill="none" stroke="#f2b3e0" stroke-width="1.1" stroke-linejoin="round" />
<path d="M1150 470 L1181.4 454 V532 L1150 548 Z" fill="none" stroke="#f2b3e0" stroke-width="1.2" stroke-linejoin="round" />
<path d="M1154 474 L1181 460 M1154 474 V546" fill="none" stroke="#f2b3e0" stroke-width="0.9" stroke-linejoin="round" />
<circle cx="1158.7" cy="478" r="3" fill="none" stroke="#f2b3e0" stroke-width="1"/>
<circle cx="1176.7" cy="467.3" r="3" fill="none" stroke="#f2b3e0" stroke-width="1"/>
<circle cx="1158.7" cy="533" r="3" fill="none" stroke="#f2b3e0" stroke-width="1"/>
<path d="M1181 474 L1545 684.4" fill="none" stroke="#f2b3e0" stroke-width="1.2" stroke-linejoin="round" />
<path d="M1181 482.5 L1545 693" fill="none" stroke="#f2b3e0" stroke-width="1.2" stroke-linejoin="round" />
<path d="M1155 489.5 L1545 715" fill="none" stroke="#f2b3e0" stroke-width="1.2" stroke-linejoin="round" />
<path d="M1155 496.6 L1545 722" fill="none" stroke="#f2b3e0" stroke-width="1.2" stroke-linejoin="round" />
<path d="M1155 518 L1545 743.4" fill="none" stroke="#f2b3e0" stroke-width="1.2" stroke-linejoin="round" />
<path d="M1155 526.5 L1545 752" fill="none" stroke="#f2b3e0" stroke-width="1.2" stroke-linejoin="round" />
<path d="M1155 489.5 V526.5 M1181 474 L1155 489.5" fill="none" stroke="#f2b3e0" stroke-width="1.0" stroke-linejoin="round" />
<path d="M1544 699 V771 M1549 696 V770" fill="none" stroke="#f2b3e0" stroke-width="1.2" stroke-linejoin="round" />
<path d="M1487.8 542.8 V550.8 L1577.4 602.3 M1487.8 542.8 L1576.5 598.7 L1597.8 594.3 M1487.8 542.8 L1495 538" fill="none" stroke="#f2b3e0" stroke-width="1.2" stroke-linejoin="round" />
<path d="M1577 598 h7 v8 h-7 z" fill="none" stroke="#f2b3e0" stroke-width="1.0" stroke-linejoin="round" />
<path d="M1550 588 V797" fill="none" stroke="#f2b3e0" stroke-width="1.2" stroke-linejoin="round" />
<path d="M1557 592 V797" fill="none" stroke="#f2b3e0" stroke-width="1.2" stroke-linejoin="round" />
<path d="M1575 603 V809" fill="none" stroke="#f2b3e0" stroke-width="1.2" stroke-linejoin="round" />
<path d="M1582 603 V809" fill="none" stroke="#f2b3e0" stroke-width="1.2" stroke-linejoin="round" />
<path d="M1600.5 593 V797" fill="none" stroke="#f2b3e0" stroke-width="1.2" stroke-linejoin="round" />
<path d="M1607.6 590 V797" fill="none" stroke="#f2b3e0" stroke-width="1.2" stroke-linejoin="round" />
<path d="M1550 797 H1557 L1575 808 L1582 808 L1607.6 797" fill="none" stroke="#f2b3e0" stroke-width="1.1" stroke-linejoin="round" />
<path d="M1580 808 V828" fill="none" stroke="#a9a9a9" stroke-width="1.1" stroke-linejoin="round" />
<path d="M1251.4 529.5 L1380 463.3 M1264.6 552.3 L1389.6 484" fill="none" stroke="#f5f032" stroke-width="1.3" stroke-linejoin="round" />
<ellipse cx="1258" cy="541" rx="8.5" ry="13" transform="rotate(25 1258 541)" fill="none" stroke="#f5f032" stroke-width="1.3"/>
<path d="M1378 460 C1386 464 1390 472 1389.6 484" fill="none" stroke="#f5f032" stroke-width="1.2" stroke-linejoin="round" />
<path d="M1262 540 L1372.6 476.5" fill="none" stroke="#f5f032" stroke-width="1.0" stroke-linejoin="round" stroke-dasharray="14 5 2 5"/>
<path d="M1316 493 C1322 497 1326 505 1325 514 M1322 490 C1329 494 1334 502 1333 511 M1316 493 L1322 490" fill="none" stroke="#f5f032" stroke-width="1.3" stroke-linejoin="round" />
<path d="M1295 497 l7 -6 l7 5 l-1 8 l-7 3 l-6 -4 z M1324 515 l8 -6 l10 6 l-1 7 l-8 3 l-8 -4 z" fill="none" stroke="#f5f032" stroke-width="1.4" stroke-linejoin="round" />
<circle cx="1302" cy="497" r="3" fill="none" stroke="#f5f032" stroke-width="1.6"/><circle cx="1333" cy="516" r="3.2" fill="none" stroke="#f5f032" stroke-width="1.6"/>
<path d="M1315.8 524 V560 M1322.4 521 V558" fill="none" stroke="#f5f032" stroke-width="1.2" stroke-linejoin="round" />
<path d="M1287 572 l12 -9 l13 7 l-1 14 l-10 8 l-12 -6 z M1292 585 l8 -5 l8 4 l-1 8 M1297 566 l5 10" fill="none" stroke="#f5f032" stroke-width="1.4" stroke-linejoin="round" />
<circle cx="1300" cy="575" r="3" fill="#f5f032"/><circle cx="1296" cy="589" r="2.5" fill="#f5f032"/>
<path d="M1302.5 573 L1338 553 M1308 582 L1342 563" fill="none" stroke="#f5f032" stroke-width="1.2" stroke-linejoin="round" />
<path d="M1333 553 l6 -5 l8 4 l2 8 l-5 7 l-8 2 l-4 -6 z" fill="none" stroke="#f5f032" stroke-width="1.4" stroke-linejoin="round" />
<path d="M1334 556 l7 -4 l6 5 l-3 7 l-7 1 z" fill="#f5f032"/>
<path d="M1326 538 l8 -4 M1328 543 l8 -4" fill="none" stroke="#f5f032" stroke-width="1.3" stroke-linejoin="round" />
<path d="M1359.8 531.3 L1439 495.6 M1372 521 L1412 500 M1359.8 582.7 L1480.8 516.4" fill="none" stroke="#f5f032" stroke-width="1.3" stroke-linejoin="round" />
<path d="M1348 545 C1338 552 1340 578 1362 585" fill="none" stroke="#f5f032" stroke-width="1.3" stroke-linejoin="round" />
<path d="M1352 546 C1358 550 1363 565 1362 585" fill="none" stroke="#f5f032" stroke-width="1.1" stroke-linejoin="round" />
<ellipse cx="1469" cy="493" rx="16.6" ry="21.5" transform="rotate(20 1469 493)" fill="none" stroke="#f5f032" stroke-width="1.2" stroke-dasharray="6 3"/>
<path d="M1379.7 514.7 C1392 520 1402 538 1402.9 559.5 M1391 511 C1404 516 1414 534 1416 556" fill="none" stroke="#f5f032" stroke-width="1.3" stroke-linejoin="round" />
<path d="M1412.8 498 C1424 504 1436 520 1439 538 M1426 500 C1438 506 1450 516 1452.6 526.3" fill="none" stroke="#f5f032" stroke-width="1.3" stroke-linejoin="round" />
<path d="M1365 566 L1470 508" fill="none" stroke="#f5f032" stroke-width="1.0" stroke-linejoin="round" stroke-dasharray="10 5 2 5"/>
<path d="M1440 490 L1478 472 M1452 512 L1482 497" fill="none" stroke="#f5f032" stroke-width="1.1" stroke-linejoin="round" stroke-dasharray="6 4"/>
<path d="M1399.6 566 l10 -5 l6 10 l-10 6 z M1436 544 l12 -5 l7 11 l-12 6 z" fill="none" stroke="#f5f032" stroke-width="1.3" stroke-linejoin="round" />
<circle cx="1407.5" cy="570" r="3.2" fill="none" stroke="#f5f032" stroke-width="1.3"/><circle cx="1446" cy="548.5" r="3.2" fill="none" stroke="#f5f032" stroke-width="1.3"/>
<path d="M1400 480 l4 4 l-3 3 l4 4 l-3 3 l4 4 l-3 3 l4 3" fill="none" stroke="#f5f032" stroke-width="1.2" stroke-linejoin="round" />
<path d="M1411 478 l6 -2 l4 6 l-3 6 l-6 0 z" fill="none" stroke="#f5f032" stroke-width="1.4" stroke-linejoin="round" />
<path d="M1361 502 l10 -4 M1363 508 l10 -4 M1365 514 l10 -4 M1371 498 v16" fill="none" stroke="#f5f032" stroke-width="1.3" stroke-linejoin="round" />
<path d="M1374.7 585 V640" fill="none" stroke="#f5f032" stroke-width="1.2" stroke-linejoin="round" />
<path d="M1381.3 583 V642" fill="none" stroke="#f5f032" stroke-width="1.2" stroke-linejoin="round" />
<path d="M1389.6 581 V636" fill="none" stroke="#f5f032" stroke-width="1.2" stroke-linejoin="round" />
<path d="M1398 576 V632" fill="none" stroke="#f5f032" stroke-width="1.2" stroke-linejoin="round" />
<path d="M1419.5 556 V614" fill="none" stroke="#f5f032" stroke-width="1.2" stroke-linejoin="round" />
<path d="M1426 552 V612" fill="none" stroke="#f5f032" stroke-width="1.2" stroke-linejoin="round" />
<path d="M1436 548 V606" fill="none" stroke="#f5f032" stroke-width="1.2" stroke-linejoin="round" />
<path d="M1442.7 545 V602" fill="none" stroke="#f5f032" stroke-width="1.2" stroke-linejoin="round" />
<path d="M1378 612 l6 -4 l4 6 l-6 4 z M1420 590 l6 -4 l4 6 l-6 4 z" fill="none" stroke="#f5f032" stroke-width="1.1" stroke-linejoin="round" />
<path d="M1356.8 627.8 L1384 648.9 L1461 605.4 L1441 593 M1356.8 627.8 V633 L1384 654 L1461 610 V605.4 M1384 648.9 V654" fill="none" stroke="#f5f032" stroke-width="1.3" stroke-linejoin="round" />
<path d="M1356.8 627.8 L1372 619 M1441 593 L1430 599" fill="none" stroke="#f5f032" stroke-width="1.1" stroke-linejoin="round" />
<path d="M1130 826.8 H1480" fill="none" stroke="#f5f032" stroke-width="0.8" stroke-linejoin="round" stroke-dasharray="3 5 1 6" opacity="0.7"/>
<path d="M1480 826.8 H1600" fill="none" stroke="#f2b3e0" stroke-width="0.8" stroke-linejoin="round" stroke-dasharray="4 4" opacity="0.7"/>
<path d="M1600 826.8 H1670" fill="none" stroke="#2244ee" stroke-width="0.8" stroke-linejoin="round" stroke-dasharray="3 4" opacity="0.7"/>
<path d="M790 826.5 H1130" fill="none" stroke="#777" stroke-width="1.0" stroke-linejoin="round" stroke-dasharray="2 14"/>
<path d="M610 314 V330 L614 326.5 L617 333 L619.5 332 L616.5 325.5 L621.5 325.5 Z" fill="#fff" stroke="#222" stroke-width="0.6"/>
</svg>
</body></html>
